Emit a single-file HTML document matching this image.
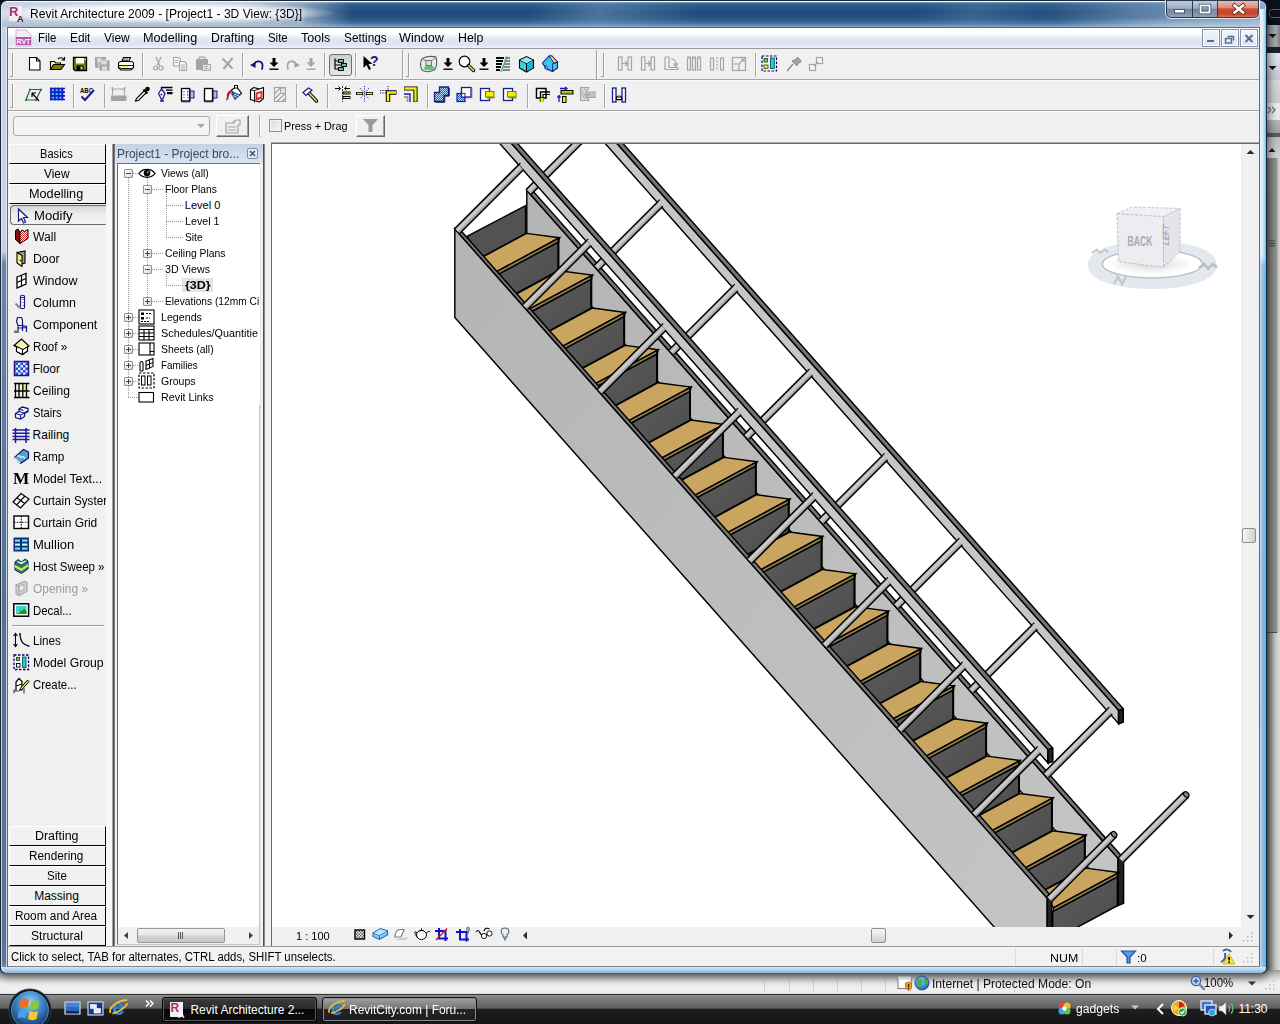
<!DOCTYPE html><html><head><meta charset="utf-8"><title>Revit Architecture 2009</title><style>html,body{margin:0;padding:0}body{width:1280px;height:1024px;position:relative;overflow:hidden;background:#0b111c;font-family:'Liberation Sans', sans-serif}span{-webkit-font-smoothing:antialiased}</style></head><body><div style="position:absolute;left:1266px;top:0px;width:14px;height:25px;background:#0b121c"></div>
<div style="position:absolute;left:1269px;top:9px;width:14px;height:9px;box-sizing:border-box;border:1px solid #59616e;border-radius:3px"></div>
<div style="position:absolute;left:1266px;top:25px;width:14px;height:22px;background:linear-gradient(90deg,#6e7276,#9a9ea2 30%,#a6aaae 70%,#7c8084)"></div>
<div style="position:absolute;left:1266px;top:47px;width:14px;height:6px;background:#1a222e"></div>
<div style="position:absolute;left:1266px;top:53px;width:14px;height:27px;background:linear-gradient(#e2e5ec,#c4c8d0)"></div>
<div style="position:absolute;left:1266px;top:80px;width:14px;height:23px;background:linear-gradient(#d6d8dd,#c9cbd0)"></div>
<div style="position:absolute;left:1266px;top:103px;width:14px;height:17px;background:#e7e8ec"></div>
<div style="position:absolute;left:1266px;top:120px;width:14px;height:13px;background:linear-gradient(#b4b7bb,#9b9ea3)"></div>
<div style="position:absolute;left:1266px;top:133px;width:14px;height:4px;background:#565a60"></div>
<div style="position:absolute;left:1266px;top:137px;width:14px;height:21px;background:linear-gradient(#b9b9b9,#d2d2d2)"></div>
<div style="position:absolute;left:1266px;top:158px;width:14px;height:475px;background:linear-gradient(90deg,#565a56,#7e827e 20%,#8e908c 75%,#c4c4c4 85%,#cfcfcf)"></div>
<div style="position:absolute;left:1266px;top:633px;width:14px;height:337px;background:linear-gradient(90deg,#5c605c,#8a8c8a 25%,#c6c6c6 65%,#dddddd)"></div>
<div style="position:absolute;left:1266px;top:632px;width:11px;height:1px;background:#4c4c4c"></div>
<svg width="14" height="140" viewBox="0 0 14 140" style="position:absolute;left:1266px;top:24px;overflow:visible;"><path d="M2.500 10h8l-4 4z" fill="#111"/><path d="M2.500 42h8l-4 4z" fill="#111"/><path d="M2 83l3 3-3 3M6 83l3 3-3 3" stroke="#6a6e74" stroke-width="1.200" fill="none"/><path d="M2.500 128h7l-3.500-4z" fill="#1c1c1c"/></svg>
<svg width="14" height="10" viewBox="0 0 14 10" style="position:absolute;left:1266px;top:240px;overflow:visible;"><path d="M3 1h6M3 3.500h6M3 6h6" stroke="#3a3a3a" stroke-width="0.900"/></svg>
<div style="position:absolute;left:0px;top:970px;width:1280px;height:24px;background:linear-gradient(#9b9b9b 0,#c9c9c9 5px,#e9e9e9 11px,#f1f1f1 14px,#ececec)"></div>
<div style="position:absolute;left:764px;top:978px;width:1px;height:14px;background:#d4d4d4"></div>
<div style="position:absolute;left:789px;top:978px;width:1px;height:14px;background:#d4d4d4"></div>
<div style="position:absolute;left:813px;top:978px;width:1px;height:14px;background:#d4d4d4"></div>
<div style="position:absolute;left:837px;top:978px;width:1px;height:14px;background:#d4d4d4"></div>
<div style="position:absolute;left:861px;top:978px;width:1px;height:14px;background:#d4d4d4"></div>
<div style="position:absolute;left:885px;top:978px;width:1px;height:14px;background:#d4d4d4"></div>
<div style="position:absolute;left:910px;top:978px;width:1px;height:14px;background:#d4d4d4"></div>
<div style="position:absolute;left:1014px;top:976px;width:1px;height:16px;background:#cfcfcf"></div>
<span id="t1" style="position:absolute;left:932.4px;top:978.04px;font:normal 12px/13.79px 'Liberation Sans', sans-serif;color:#111;white-space:pre;transform:scaleX(1.0084);transform-origin:0 0;">Internet | Protected Mode: On</span>
<span id="t2" style="position:absolute;left:1204.4px;top:977.04px;font:normal 12px/13.79px 'Liberation Sans', sans-serif;color:#111;white-space:pre;transform:scaleX(0.9510);transform-origin:0 0;">100%</span>
<div style="position:absolute;left:0px;top:994px;width:1280px;height:30px;background:linear-gradient(#343434 0,#343434 1px,#8e8e8e 1px,#7c7c7c 5px,#606060 14px,#1e1e20 15.5px,#161618)"></div>
<div style="position:absolute;left:0px;top:993px;width:1280px;height:1px;background:#dadada"></div>
<div style="position:absolute;left:162px;top:997px;width:155px;height:25px;border-radius:3px;border:1px solid #000;box-sizing:border-box;background:linear-gradient(#3c3c3c,#2a2a2a 46%,#060606 50%,#0e0e0e);box-shadow:inset 0 0 0 1px #5a5a5a"></div>
<div style="position:absolute;left:322px;top:997px;width:155px;height:25px;border-radius:3px;border:1px solid #111;box-sizing:border-box;background:linear-gradient(#a2a2a2,#747474 46%,#242426 50%,#1e1e20);box-shadow:inset 0 0 0 1px #8c8c8c"></div>
<span id="t3" style="position:absolute;left:190.4px;top:1004.04px;font:normal 12px/13.79px 'Liberation Sans', sans-serif;color:#fff;white-space:pre;">Revit Architecture 2...</span>
<span id="t4" style="position:absolute;left:349.4px;top:1004.04px;font:normal 12px/13.79px 'Liberation Sans', sans-serif;color:#fff;white-space:pre;transform:scaleX(0.9967);transform-origin:0 0;">RevitCity.com | Foru...</span>
<span id="t5" style="position:absolute;left:1076.4px;top:1003.04px;font:normal 12px/13.79px 'Liberation Sans', sans-serif;color:#fff;white-space:pre;transform:scaleX(1.0116);transform-origin:0 0;">gadgets</span>
<span id="t6" style="position:absolute;left:1238.4px;top:1003.04px;font:normal 12px/13.79px 'Liberation Sans', sans-serif;color:#fff;white-space:pre;">11:30</span>
<div style="position:absolute;left:0px;top:0px;width:1267px;height:974px;border-radius:7px 7px 6px 6px;background:#1a2838;box-shadow:0 2px 8px 2px rgba(0,0,0,.55)"></div>
<div style="position:absolute;left:1px;top:1px;width:1265px;height:972px;border-radius:6px;background:linear-gradient(#dfe7f2 0,#c9d5e6 30px,#c6d2e3 250px,#6c84a6 262px,#56708f 600px,#5b7594 960px,#7fa4c8)"></div>
<div style="position:absolute;left:2px;top:2px;width:1263px;height:25px;border-radius:5px 5px 0 0;background:radial-gradient(ellipse 175px 11px at 160px 11px,rgba(255,255,255,.95) 0,rgba(255,255,255,.9) 55%,rgba(255,255,255,.45) 80%,rgba(255,255,255,0) 100%),linear-gradient(90deg,rgba(201,212,227,1) 0,rgba(201,212,227,.97) 240px,rgba(201,212,227,.6) 300px,rgba(201,212,227,0) 350px),linear-gradient(100deg,rgba(255,255,255,0) 520px,rgba(150,185,220,.35) 590px,rgba(255,255,255,0) 690px,rgba(255,255,255,0) 900px,rgba(120,160,200,.25) 960px,rgba(255,255,255,0) 1040px),linear-gradient(#7f9dbd 0,#2d5b8c 2px,#1f4b7b 10px,#24527f 16px,#3e6c9a 21px,#6d95bb 24px,#86a8c8)"></div>
<div style="position:absolute;left:1040px;top:2px;width:225px;height:25px;border-radius:0 5px 0 0;background:linear-gradient(90deg,rgba(150,176,206,0),rgba(150,176,206,.45) 90px,rgba(176,196,220,.75) 215px)"></div>
<div style="position:absolute;left:1060px;top:17px;width:205px;height:10px;background:linear-gradient(rgba(200,214,232,0),rgba(200,214,232,.6));-webkit-mask-image:linear-gradient(90deg,transparent,#000 120px);mask-image:linear-gradient(90deg,transparent,#000 120px)"></div>
<div style="position:absolute;left:2px;top:18px;width:330px;height:9px;background:linear-gradient(rgba(150,168,192,0),rgba(150,168,192,.55));-webkit-mask-image:linear-gradient(90deg,#000 250px,transparent 330px);mask-image:linear-gradient(90deg,#000 250px,transparent 330px)"></div>
<div style="position:absolute;left:6px;top:1px;width:1254px;height:1px;background:rgba(255,255,255,.75)"></div>
<div style="position:absolute;left:1260px;top:9px;width:6px;height:959px;background:linear-gradient(90deg,rgba(255,255,255,.55),rgba(255,255,255,.1) 45%,rgba(80,200,250,.55) 85%,rgba(60,190,245,.95)),linear-gradient(#dcebf7 0,#cfe4f4 247px,#86b6e0 257px,#7aaedc 600px,#80b2de)"></div>
<div style="position:absolute;left:1259px;top:27px;width:1px;height:941px;background:#5d6b7d"></div>
<div style="position:absolute;left:1px;top:967px;width:1265px;height:6px;border-radius:0 0 5px 5px;background:linear-gradient(#dce8f6,#b5d0ec 50%,#86b4dc)"></div>
<div style="position:absolute;left:4px;top:973px;width:1259px;height:1px;background:#1d7088"></div>
<div style="position:absolute;left:8px;top:966px;width:1252px;height:1px;background:#7d8590"></div>
<div style="position:absolute;left:7px;top:27px;width:1px;height:940px;background:#646a72"></div>
<div style="position:absolute;left:6px;top:27px;width:1px;height:940px;background:rgba(225,236,250,.8)"></div>
<div style="position:absolute;left:1px;top:8px;width:1px;height:960px;background:rgba(225,236,250,.8)"></div>
<svg width="18" height="18" viewBox="0 0 18 18" style="position:absolute;left:9px;top:5px;overflow:visible;"><rect x="0" y="1" width="13" height="15" fill="#f4eef4" opacity=".9"/><text x="0" y="11" font-family="'Liberation Sans', sans-serif" font-weight="bold" font-size="13" fill="#b02a7a">R</text><text x="8" y="17" font-family="'Liberation Sans', sans-serif" font-weight="bold" font-size="9" fill="#222">A</text></svg>
<span id="t7" style="position:absolute;left:29.6px;top:7.84px;font:normal 12px/13.79px 'Liberation Sans', sans-serif;color:#000;white-space:pre;transform:scaleX(1.0060);transform-origin:0 0;text-shadow:0 0 4px #fff,0 0 6px #fff;">Revit Architecture 2009 - [Project1 - 3D View: {3D}]</span>
<div style="position:absolute;left:1165px;top:0px;width:95px;height:19px;border-radius:0 0 6px 6px;background:rgba(235,242,250,.85)"></div>
<div style="position:absolute;left:1166px;top:0px;width:93px;height:18px;border-radius:0 0 5px 5px;background:#2a3a50"></div>
<div style="position:absolute;left:1167px;top:1px;width:25px;height:16px;border-radius:0 0 0 4px;background:linear-gradient(#c2cddb,#9eafc4 45%,#71869f 52%,#8da0b8)"></div>
<div style="position:absolute;left:1193px;top:1px;width:24px;height:16px;background:linear-gradient(#c2cddb,#9eafc4 45%,#71869f 52%,#8da0b8)"></div>
<div style="position:absolute;left:1218px;top:1px;width:40px;height:16px;border-radius:0 0 4px 0;background:linear-gradient(#ecb7ab,#df917f 40%,#cc4d33 50%,#c7462a 80%,#da7050)"></div>
<svg width="94" height="16" viewBox="0 0 94 16" style="position:absolute;left:1165px;top:1px;overflow:visible;"><rect x="9.500" y="8.500" width="10" height="3.500" fill="#fff" stroke="#44546a" stroke-width="1"/><rect x="35.500" y="4.500" width="9" height="7" fill="none" stroke="#44546a" stroke-width="3.400"/><rect x="35.500" y="4.500" width="9" height="7" fill="none" stroke="#fff" stroke-width="1.800"/><path d="M69.500 4.500l8.500 7M78 4.500l-8.500 7" stroke="#6a2a1c" stroke-width="4.200" stroke-linecap="square"/><path d="M69.500 4.500l8.500 7M78 4.500l-8.500 7" stroke="#fff" stroke-width="2.500" stroke-linecap="square"/></svg>
<div style="position:absolute;left:8px;top:27px;width:1251px;height:21px;background:linear-gradient(#5b6b80 0,#5b6b80 1px,#ffffff 1px,#ffffff 7px,#e4e9f7 11px,#dde3f3 17px,#e8ecf7 20px,#f4f6fb)"></div>
<div style="position:absolute;left:8px;top:48px;width:1251px;height:1px;background:#9a9a9a"></div>
<svg width="18" height="18" viewBox="0 0 18 18" style="position:absolute;left:15px;top:29px;overflow:visible;"><path d="M1 1h10l5 5v11H1z" fill="#f6f0f6" stroke="#c9b2cf" stroke-width="1"/><rect x="1" y="8" width="15" height="8" fill="#b557a6"/><text x="1.5" y="15" font-family="'Liberation Sans', sans-serif" font-weight="bold" font-size="7" fill="#fff">RVT</text></svg>
<span id="t8" style="position:absolute;left:37.7px;top:32.04px;font:normal 12px/13.79px 'Liberation Sans', sans-serif;color:#000;white-space:pre;transform:scaleX(0.9512);transform-origin:0 0;">File</span>
<span id="t9" style="position:absolute;left:69.7px;top:32.04px;font:normal 12px/13.79px 'Liberation Sans', sans-serif;color:#000;white-space:pre;transform:scaleX(0.9861);transform-origin:0 0;">Edit</span>
<span id="t10" style="position:absolute;left:103.7px;top:32.04px;font:normal 12px/13.79px 'Liberation Sans', sans-serif;color:#000;white-space:pre;transform:scaleX(0.9962);transform-origin:0 0;">View</span>
<span id="t11" style="position:absolute;left:142.7px;top:32.04px;font:normal 12px/13.79px 'Liberation Sans', sans-serif;color:#000;white-space:pre;transform:scaleX(1.0550);transform-origin:0 0;">Modelling</span>
<span id="t12" style="position:absolute;left:210.7px;top:32.04px;font:normal 12px/13.79px 'Liberation Sans', sans-serif;color:#000;white-space:pre;transform:scaleX(1.0278);transform-origin:0 0;">Drafting</span>
<span id="t13" style="position:absolute;left:267.7px;top:32.04px;font:normal 12px/13.79px 'Liberation Sans', sans-serif;color:#000;white-space:pre;transform:scaleX(0.9523);transform-origin:0 0;">Site</span>
<span id="t14" style="position:absolute;left:301px;top:32.04px;font:normal 12px/13.79px 'Liberation Sans', sans-serif;color:#000;white-space:pre;transform:scaleX(1.0423);transform-origin:0 0;">Tools</span>
<span id="t15" style="position:absolute;left:343.7px;top:32.04px;font:normal 12px/13.79px 'Liberation Sans', sans-serif;color:#000;white-space:pre;transform:scaleX(0.9848);transform-origin:0 0;">Settings</span>
<span id="t16" style="position:absolute;left:399.4px;top:32.04px;font:normal 12px/13.79px 'Liberation Sans', sans-serif;color:#000;white-space:pre;transform:scaleX(1.0542);transform-origin:0 0;">Window</span>
<span id="t17" style="position:absolute;left:457.7px;top:32.04px;font:normal 12px/13.79px 'Liberation Sans', sans-serif;color:#000;white-space:pre;transform:scaleX(1.0289);transform-origin:0 0;">Help</span>
<div style="position:absolute;left:1202px;top:29px;width:18px;height:18px;box-sizing:border-box;border:1px solid #8391a6;background:linear-gradient(#f2f6fc,#dce6f5);box-shadow:inset 0 0 0 1px #fff"></div>
<div style="position:absolute;left:1221px;top:29px;width:18px;height:18px;box-sizing:border-box;border:1px solid #8391a6;background:linear-gradient(#f2f6fc,#dce6f5);box-shadow:inset 0 0 0 1px #fff"></div>
<div style="position:absolute;left:1240px;top:29px;width:18px;height:18px;box-sizing:border-box;border:1px solid #8391a6;background:linear-gradient(#f2f6fc,#dce6f5);box-shadow:inset 0 0 0 1px #fff"></div>
<svg width="56" height="18" viewBox="0 0 56 18" style="position:absolute;left:1202px;top:29px;overflow:visible;"><rect x="5" y="11" width="7" height="2" fill="#5b6b82"/><path d="M25.500 7.500h6v4" fill="none" stroke="#5b6b82" stroke-width="1.4"/><rect x="23.500" y="9.500" width="6" height="4.500" fill="none" stroke="#5b6b82" stroke-width="1.400"/><path d="M43.500 6l7 7M50.500 6l-7 7" stroke="#5b6b82" stroke-width="2"/></svg>
<div style="position:absolute;left:8px;top:49px;width:1251px;height:93px;background:#f0f0f0"></div>
<div style="position:absolute;left:8px;top:79px;width:1251px;height:1px;background:#a8a8a8"></div>
<div style="position:absolute;left:8px;top:80px;width:1251px;height:1px;background:#fbfbfb"></div>
<div style="position:absolute;left:8px;top:110px;width:1251px;height:1px;background:#a8a8a8"></div>
<div style="position:absolute;left:8px;top:111px;width:1251px;height:1px;background:#fbfbfb"></div>
<div style="position:absolute;left:12px;top:53px;width:1px;height:24px;background:#9c9c9c"></div>
<div style="position:absolute;left:13px;top:53px;width:1px;height:24px;background:#ffffff"></div>
<div style="position:absolute;left:10px;top:76px;width:3px;height:1px;background:#9c9c9c"></div>
<div style="position:absolute;left:12px;top:84px;width:1px;height:24px;background:#9c9c9c"></div>
<div style="position:absolute;left:13px;top:84px;width:1px;height:24px;background:#ffffff"></div>
<div style="position:absolute;left:10px;top:107px;width:3px;height:1px;background:#9c9c9c"></div>
<div style="position:absolute;left:402px;top:50px;width:1px;height:29px;background:#a0a0a0"></div>
<div style="position:absolute;left:403px;top:50px;width:1px;height:29px;background:#fdfdfd"></div>
<div style="position:absolute;left:408px;top:53px;width:1px;height:24px;background:#9c9c9c"></div>
<div style="position:absolute;left:409px;top:53px;width:1px;height:24px;background:#ffffff"></div>
<div style="position:absolute;left:406px;top:76px;width:3px;height:1px;background:#9c9c9c"></div>
<div style="position:absolute;left:596px;top:50px;width:1px;height:29px;background:#a0a0a0"></div>
<div style="position:absolute;left:597px;top:50px;width:1px;height:29px;background:#fdfdfd"></div>
<div style="position:absolute;left:603px;top:53px;width:1px;height:24px;background:#9c9c9c"></div>
<div style="position:absolute;left:604px;top:53px;width:1px;height:24px;background:#ffffff"></div>
<div style="position:absolute;left:601px;top:76px;width:3px;height:1px;background:#9c9c9c"></div>
<div style="position:absolute;left:142px;top:53px;width:1px;height:24px;background:#a6a6a6"></div>
<div style="position:absolute;left:143px;top:53px;width:1px;height:24px;background:#fcfcfc"></div>
<div style="position:absolute;left:242px;top:53px;width:1px;height:24px;background:#a6a6a6"></div>
<div style="position:absolute;left:243px;top:53px;width:1px;height:24px;background:#fcfcfc"></div>
<div style="position:absolute;left:324px;top:53px;width:1px;height:24px;background:#a6a6a6"></div>
<div style="position:absolute;left:325px;top:53px;width:1px;height:24px;background:#fcfcfc"></div>
<div style="position:absolute;left:355px;top:53px;width:1px;height:24px;background:#a6a6a6"></div>
<div style="position:absolute;left:356px;top:53px;width:1px;height:24px;background:#fcfcfc"></div>
<div style="position:absolute;left:755px;top:53px;width:1px;height:24px;background:#a6a6a6"></div>
<div style="position:absolute;left:756px;top:53px;width:1px;height:24px;background:#fcfcfc"></div>
<div style="position:absolute;left:73px;top:84px;width:1px;height:24px;background:#a6a6a6"></div>
<div style="position:absolute;left:74px;top:84px;width:1px;height:24px;background:#fcfcfc"></div>
<div style="position:absolute;left:104px;top:84px;width:1px;height:24px;background:#a6a6a6"></div>
<div style="position:absolute;left:105px;top:84px;width:1px;height:24px;background:#fcfcfc"></div>
<div style="position:absolute;left:296px;top:84px;width:1px;height:24px;background:#a6a6a6"></div>
<div style="position:absolute;left:297px;top:84px;width:1px;height:24px;background:#fcfcfc"></div>
<div style="position:absolute;left:327px;top:84px;width:1px;height:24px;background:#a6a6a6"></div>
<div style="position:absolute;left:328px;top:84px;width:1px;height:24px;background:#fcfcfc"></div>
<div style="position:absolute;left:427px;top:84px;width:1px;height:24px;background:#a6a6a6"></div>
<div style="position:absolute;left:428px;top:84px;width:1px;height:24px;background:#fcfcfc"></div>
<div style="position:absolute;left:527px;top:84px;width:1px;height:24px;background:#a6a6a6"></div>
<div style="position:absolute;left:528px;top:84px;width:1px;height:24px;background:#fcfcfc"></div>
<div style="position:absolute;left:604px;top:84px;width:1px;height:24px;background:#a6a6a6"></div>
<div style="position:absolute;left:605px;top:84px;width:1px;height:24px;background:#fcfcfc"></div>
<div style="position:absolute;left:329px;top:54px;width:23px;height:22px;box-sizing:border-box;border:1px solid #6f6f6f;border-radius:3px;background:linear-gradient(#cfcfcf,#e6e6e6)"></div>
<div style="position:absolute;left:13px;top:116px;width:197px;height:20px;box-sizing:border-box;border:1px solid #a9a9a9;border-radius:3px;background:#f4f4f4"></div>
<svg width="10" height="8" viewBox="0 0 10 8" style="position:absolute;left:196px;top:122px;overflow:visible;"><path d="M1 2h8l-4 4z" fill="#a8a8a8"/></svg>
<div style="position:absolute;left:216px;top:115px;width:33px;height:22px;box-sizing:border-box;background:#f0f0f0;border-top:1px solid #fff;border-left:1px solid #fff;border-right:1px solid #696969;border-bottom:1px solid #696969;box-shadow:inset -1px -1px 0 #a0a0a0"></div>
<div style="position:absolute;left:259px;top:115px;width:1px;height:22px;background:#a6a6a6"></div>
<div style="position:absolute;left:260px;top:115px;width:1px;height:22px;background:#fcfcfc"></div>
<div style="position:absolute;left:269px;top:119px;width:13px;height:13px;box-sizing:border-box;border:1px solid #8e8f8f;background:linear-gradient(135deg,#d9d9d9,#f7f7f7);box-shadow:inset 0 0 0 1px #f4f4f4"></div>
<span id="t18" style="position:absolute;left:284px;top:119.69px;font:normal 11.5px/13.21px 'Liberation Sans', sans-serif;color:#000;white-space:pre;transform:scaleX(0.9416);transform-origin:0 0;">Press + Drag</span>
<div style="position:absolute;left:356px;top:115px;width:29px;height:22px;box-sizing:border-box;background:#f0f0f0;border-top:1px solid #fff;border-left:1px solid #fff;border-right:1px solid #696969;border-bottom:1px solid #696969;box-shadow:inset -1px -1px 0 #a0a0a0"></div>
<svg width="18" height="16" viewBox="0 0 18 16" style="position:absolute;left:362px;top:118px;overflow:visible;"><path d="M1 1h15l-5.500 6v7h-4V7z" fill="#9a9a9a"/></svg>
<svg width="18" height="18" viewBox="0 0 18 18" style="position:absolute;left:224px;top:117px;overflow:visible;"><path d="M2 6h8l2-3h4v5h-2v8H2z" fill="none" stroke="#a4a4a4" stroke-width="1.2"/><path d="M4 10h8M4 13h8" stroke="#a4a4a4"/><path d="M8 6l3-3" stroke="#a4a4a4"/></svg>
<svg width="16" height="16" viewBox="0 0 16 16" style="position:absolute;left:28px;top:56px;overflow:visible;"><path d="M1.500 1.500h7l3.500 3.500v9h-10.500z" fill="#fff" stroke="#000" stroke-width="1.1"/><path d="M8.500 1.500v3.500h3.500" fill="none" stroke="#000" stroke-width="1.1"/></svg>
<svg width="16" height="16" viewBox="0 0 16 16" style="position:absolute;left:49px;top:56px;overflow:visible;"><path d="M1.500 13.500v-8h4l1 1.500h5v2" fill="#ffff80" stroke="#000" stroke-width="1.1"/><path d="M1.500 13.500l3-5h11l-3.500 5z" fill="#808000" stroke="#000" stroke-width="1.1"/><path d="M9 3c2-2 5-1.500 6 .5M15.500 1v3h-3" fill="none" stroke="#000" stroke-width="1.1"/></svg>
<svg width="16" height="16" viewBox="0 0 16 16" style="position:absolute;left:72px;top:56px;overflow:visible;"><path d="M1.500 1.500h13v13h-11.500l-1.500-1.500z" fill="#808000" stroke="#000" stroke-width="1.300"/><rect x="4" y="2" width="8" height="5.500" fill="#fff"/><rect x="4.500" y="9.500" width="7" height="5" fill="#000"/><rect x="8.500" y="10.500" width="2" height="3" fill="#c8c8c8"/><rect x="12.500" y="2.500" width="1.200" height="1.200" fill="#fff"/></svg>
<svg width="17" height="17" viewBox="0 0 17 17" style="position:absolute;left:94px;top:55px;overflow:visible;"><path d="M1 2h11v11h-10l-1-1z" fill="#a4a4a4"/><path d="M5 5h11v11h-10l-1-1z" fill="#a4a4a4" stroke="#f4f4f4" stroke-width=".8"/><rect x="7" y="6" width="6" height="3.500" fill="#dcdcdc"/><rect x="8" y="11.500" width="5" height="3.500" fill="#dcdcdc"/><path d="M3 3l4 4M7 3L3 7" stroke="#e4e4e4" stroke-width="1.400"/></svg>
<svg width="18" height="16" viewBox="0 0 18 16" style="position:absolute;left:117px;top:56px;overflow:visible;"><path d="M4.500 6l2-4.500h7l-2 4.500" fill="#fff" stroke="#000" stroke-width="1.1"/><path d="M6.500 3h5M6 4.500h5" stroke="#000" stroke-width=".7"/><path d="M1.500 7.500c0-1.500 1.500-2 3-2h9c1.500 0 3 .5 3 2v4l-2.500 2.500h-10l-2.500-2z" fill="#fff" stroke="#000" stroke-width="1.1"/><path d="M1.500 9.500h15M2 11.500l2.500 1h10" fill="none" stroke="#000" stroke-width="1"/><rect x="5" y="9.800" width="6" height="1.400" fill="#e8e840"/></svg>
<svg width="16" height="16" viewBox="0 0 16 16" style="position:absolute;left:152px;top:56px;overflow:visible;"><path d="M4 1l4 9M9 1l-4 9" stroke="#a4a4a4" stroke-width="1.200" fill="none"/><circle cx="3.500" cy="12" r="2" fill="none" stroke="#a4a4a4" stroke-width="1.200"/><circle cx="9" cy="12" r="2" fill="none" stroke="#a4a4a4" stroke-width="1.200"/></svg>
<svg width="16" height="16" viewBox="0 0 16 16" style="position:absolute;left:172px;top:56px;overflow:visible;"><path d="M1.500 1.500h5l2 2v6.500h-7z" fill="#f4f4f4" stroke="#a4a4a4" stroke-width="1.100"/><path d="M7.500 5.500h5l2 2v7h-7z" fill="#f4f4f4" stroke="#a4a4a4" stroke-width="1.100"/><path d="M3 4.500h3M3 6.500h3M9 9h4M9 11h4M9 13h4" stroke="#a4a4a4" stroke-width=".9"/></svg>
<svg width="16" height="16" viewBox="0 0 16 16" style="position:absolute;left:195px;top:56px;overflow:visible;"><rect x="1" y="3" width="12" height="11" rx="1" fill="#a4a4a4"/><rect x="4" y="1.200" width="6" height="3" rx="1" fill="none" stroke="#a4a4a4" stroke-width="1.200"/><rect x="7.500" y="8.500" width="8" height="6" fill="#ececec" stroke="#a4a4a4" stroke-width="1"/><path d="M9 10.500h4M9 12.500h5" stroke="#a4a4a4" stroke-width=".9"/></svg>
<svg width="14" height="14" viewBox="0 0 14 14" style="position:absolute;left:221px;top:57px;overflow:visible;"><path d="M1.500 1.500l10 10M11.500 1l-9 11" stroke="#a4a4a4" stroke-width="2" fill="none"/></svg>
<svg width="16" height="14" viewBox="0 0 16 14" style="position:absolute;left:249px;top:57px;overflow:visible;"><path d="M1 8l5.500-3v6z" fill="#101070"/><path d="M5 8c1-5 9-5 8.500 1.500c0 1.500-.5 2.500-1 3" fill="none" stroke="#101070" stroke-width="1.700"/></svg>
<svg width="12" height="14" viewBox="0 0 12 14" style="position:absolute;left:268px;top:57px;overflow:visible;"><path d="M4.500 1h3v4.500h3l-4.500 4.500-4.500-4.500h3z" fill="#000"/><rect x="1.500" y="11.500" width="9" height="1.400" fill="#000"/></svg>
<svg width="16" height="14" viewBox="0 0 16 14" style="position:absolute;left:285px;top:57px;overflow:visible;"><path d="M15 8l-5.500-3v6z" fill="#a4a4a4"/><path d="M11 8c-1-5-9-5-8.500 1.500c0 1.500.5 2.500 1 3" fill="none" stroke="#a4a4a4" stroke-width="1.700"/></svg>
<svg width="12" height="14" viewBox="0 0 12 14" style="position:absolute;left:305px;top:57px;overflow:visible;"><path d="M4.500 1h3v4.500h3l-4.500 4.500-4.500-4.500h3z" fill="#a4a4a4"/><rect x="1.500" y="11.500" width="9" height="1.400" fill="#a4a4a4"/></svg>
<svg width="17" height="16" viewBox="0 0 17 16" style="position:absolute;left:332px;top:57px;overflow:visible;"><path d="M3 1.500v10.500h4M3 4h4M3 8h7" fill="none" stroke="#000" stroke-width="1.200"/><rect x="6.500" y="2.500" width="5" height="3" fill="#50c8a8" stroke="#000" stroke-width=".9"/><rect x="9.500" y="6.500" width="5" height="3" fill="#50c8a8" stroke="#000" stroke-width=".9"/><rect x="6.500" y="10.500" width="5" height="3" fill="#50c8a8" stroke="#000" stroke-width=".9"/></svg>
<svg width="18" height="18" viewBox="0 0 18 18" style="position:absolute;left:362px;top:55px;overflow:visible;"><path d="M1.500 1l0 12 3-3 2.500 5 2-1-2.500-5h4z" fill="#000"/><text x="8" y="11" font-family="'Liberation Sans', sans-serif" font-weight="bold" font-size="14" fill="#1a1a8a">?</text></svg>
<svg width="18" height="18" viewBox="0 0 18 18" style="position:absolute;left:420px;top:55px;overflow:visible;"><path d="M2 4c3-3 11-3 14-2c1 4 1 10-2 13c-4 2-9 2-12 0c-2-4-2-8 0-11z" fill="#e8e8e8" stroke="#5a5a5a" stroke-width="1.100"/><path d="M3.500 13.500c3 2 8 2 11 0l-3-3.500h-5z" fill="#5cc46c"/><rect x="6" y="5.500" width="5.500" height="5" fill="#dcdcdc" stroke="#7a7a7a" stroke-width="1"/><path d="M2.500 3.500l3.500 2.500M15.500 2.500l-4 3.500" stroke="#7a7a7a" stroke-width="1"/></svg>
<svg width="12" height="14" viewBox="0 0 12 14" style="position:absolute;left:442px;top:57px;overflow:visible;"><path d="M4.500 1h3v4.500h3l-4.500 4.500-4.500-4.500h3z" fill="#000"/><rect x="1.500" y="11.500" width="9" height="1.400" fill="#000"/></svg>
<svg width="18" height="18" viewBox="0 0 18 18" style="position:absolute;left:458px;top:55px;overflow:visible;"><circle cx="6.500" cy="6.500" r="5.300" fill="#fff" stroke="#000" stroke-width="1.200"/><path d="M10.500 10.500l5 5" stroke="#000" stroke-width="3.200" stroke-linecap="round"/><path d="M10.800 10.800l4.600 4.600" stroke="#e8e850" stroke-width="1.500" stroke-linecap="round"/></svg>
<svg width="12" height="14" viewBox="0 0 12 14" style="position:absolute;left:478px;top:57px;overflow:visible;"><path d="M4.500 1h3v4.500h3l-4.500 4.500-4.500-4.500h3z" fill="#000"/><rect x="1.500" y="11.500" width="9" height="1.400" fill="#000"/></svg>
<svg width="16" height="16" viewBox="0 0 16 16" style="position:absolute;left:495px;top:56px;overflow:visible;"><path d="M1 2h8M1 5h7M1 8h6M1 11h5M1 14h4" stroke="#000" stroke-width="2"/><path d="M10 2h5M9.500 5h5.500M9 8h6M8.500 11h6.500M8 14h7" stroke="#000" stroke-width=".9"/><path d="M12 .5l-6 15.500" stroke="#58a090" stroke-width="1.400"/></svg>
<svg width="17" height="18" viewBox="0 0 17 18" style="position:absolute;left:518px;top:55px;overflow:visible;"><path d="M1.500 5l7-3.500 7 3.500v8l-7 4-7-4z" fill="#30d8e8" stroke="#000" stroke-width="1.100"/><path d="M1.500 5l7 3.500 7-3.500M8.500 8.500v8.500" fill="none" stroke="#000" stroke-width="1.100"/><path d="M2.200 5.200l6.300-3 6.300 3-6.300 3z" fill="#90e8f0"/><path d="M9 9l6-3v6.800l-6 3.400z" fill="#18b8c8"/></svg>
<svg width="18" height="19" viewBox="0 0 18 19" style="position:absolute;left:541px;top:54px;overflow:visible;"><path d="M1.500 9l6.500-7 3 0 5.500 6v6l-5 3.500-6.500-3z" fill="#38c8e8" stroke="#1a1a8a" stroke-width="1.100"/><path d="M8 2l3 0 5.500 6-3 1.500z" fill="#f0e040" stroke="#1a1a8a" stroke-width=".9"/><path d="M4 11.500v4M4 11.500l2 1v4" fill="#fff" stroke="#1a1a8a" stroke-width=".8"/><path d="M11.500 17v-7.500l5-1.500" fill="none" stroke="#1a1a8a" stroke-width=".9"/></svg>
<svg width="16" height="16" viewBox="0 0 16 16" style="position:absolute;left:617px;top:56px;overflow:visible;"><g fill="none" stroke="#a4a4a4" stroke-width="1.200"><rect x="1.500" y="1" width="3.500" height="13"/><rect x="11" y="1" width="3.500" height="13"/><path d="M5 7.500h5M8 5l2.500 2.500-2.500 2.500"/></g></svg>
<svg width="16" height="16" viewBox="0 0 16 16" style="position:absolute;left:640px;top:56px;overflow:visible;"><g fill="none" stroke="#a4a4a4" stroke-width="1.200"><rect x="1.500" y="1" width="3.500" height="13"/><rect x="11" y="1" width="3.500" height="13"/><path d="M5 7.500h5M8 5l2.500 2.500-2.500 2.500"/></g></svg>
<svg width="16" height="16" viewBox="0 0 16 16" style="position:absolute;left:663px;top:56px;overflow:visible;"><g fill="none" stroke="#a4a4a4" stroke-width="1.200"><path d="M2 1v12.500h12.500M2 13.500h13v-2h-9v-10.500h-4"/><path d="M8 3c3 0 5 2 5 5M11 8h3.500l-2 2.500z"/></g></svg>
<svg width="16" height="16" viewBox="0 0 16 16" style="position:absolute;left:686px;top:56px;overflow:visible;"><g fill="none" stroke="#a4a4a4" stroke-width="1.200"><rect x="1.500" y="2" width="3" height="12"/><rect x="6.500" y="2" width="3" height="12"/><rect x="11.500" y="2" width="3" height="12"/><path d="M1 1h4M6 1h4M11 1h4"/></g></svg>
<svg width="16" height="16" viewBox="0 0 16 16" style="position:absolute;left:709px;top:56px;overflow:visible;"><g fill="none" stroke="#a4a4a4" stroke-width="1.200"><rect x="1.500" y="2" width="3" height="12"/><rect x="11.500" y="2" width="3" height="12"/><path d="M8 1v14" stroke-dasharray="2 1.500"/></g></svg>
<svg width="16" height="16" viewBox="0 0 16 16" style="position:absolute;left:731px;top:56px;overflow:visible;"><g fill="none" stroke="#a4a4a4" stroke-width="1.200"><rect x="1.500" y="1.500" width="13" height="13"/><path d="M1.500 8h6.500v6.500M8 8l5-5M10 3h3v3"/></g></svg>
<svg width="17" height="18" viewBox="0 0 17 18" style="position:absolute;left:761px;top:55px;overflow:visible;"><rect x="1" y="1" width="14.500" height="15" fill="#f0f0f0" stroke="#000060" stroke-width="1.200" stroke-dasharray="2.500 1.500"/><rect x="3" y="3.500" width="3.500" height="3.500" fill="#70d040" stroke="#104010" stroke-width=".8"/><rect x="3" y="10" width="4" height="3.500" fill="#f0e040" stroke="#404000" stroke-width=".8"/><rect x="9.500" y="3" width="3.800" height="10.500" fill="#20d0d8" stroke="#004048" stroke-width=".8"/></svg>
<svg width="17" height="17" viewBox="0 0 17 17" style="position:absolute;left:786px;top:55px;overflow:visible;"><path d="M1 16l6-7" stroke="#8a8a8a" stroke-width="1.300"/><path d="M6 6l5 5 1.500-3 3-1.500-4-4.500-1.500 2.500z" fill="#a4a4a4" stroke="#8a8a8a" stroke-width="1"/></svg>
<svg width="16" height="16" viewBox="0 0 16 16" style="position:absolute;left:808px;top:56px;overflow:visible;"><rect x="8.500" y="1.500" width="6" height="6" fill="#f6f6f6" stroke="#a4a4a4" stroke-width="1.200"/><rect x="1.500" y="8.500" width="6" height="6" fill="#f6f6f6" stroke="#a4a4a4" stroke-width="1.200"/><path d="M6 10l4-4" stroke="#a4a4a4" stroke-width="1.200"/></svg>
<svg width="18" height="15" viewBox="0 0 18 15" style="position:absolute;left:25px;top:87px;overflow:visible;"><path d="M5 2.500h11l-5 10.500h-10z" fill="none" stroke="#207020" stroke-width="1.200"/><circle cx="5" cy="2.500" r="1" fill="#207020"/><circle cx="16" cy="2.500" r="1" fill="#207020"/><circle cx="1" cy="13" r="1" fill="#207020"/><circle cx="11" cy="13" r="1" fill="#207020"/><path d="M14 14l-7-8M7 6v4M7 6h4" stroke="#000" stroke-width="1.200" fill="none"/></svg>
<svg width="17" height="14" viewBox="0 0 17 14" style="position:absolute;left:49px;top:87px;overflow:visible;"><rect x="1.500" y="1.500" width="13.500" height="11" fill="#30d0f8"/><path d="M1 1.500h15M1 5.200h15M1 8.800h15M1 12.500h15M2 .5v13M5.800 .5v13M9.500 .5v13M13.200 .5v13" stroke="#1818c0" stroke-width="1.700"/></svg>
<svg width="16" height="16" viewBox="0 0 16 16" style="position:absolute;left:80px;top:86px;overflow:visible;"><text x="0" y="6.500" font-family="'Liberation Sans', sans-serif" font-weight="bold" font-size="7" fill="#000" textLength="13" lengthAdjust="spacingAndGlyphs">ABC</text><path d="M1.500 10.500l3.500 3.500 9-10" fill="none" stroke="#1a1a8a" stroke-width="2"/></svg>
<svg width="18" height="16" viewBox="0 0 18 16" style="position:absolute;left:110px;top:86px;overflow:visible;"><rect x="1" y="9.500" width="15.500" height="5.500" fill="#a4a4a4"/><path d="M2.500 1v8M14.500 1v8M2.500 3h12M1 1.500l3 3M13 4.500l3-3" stroke="#a4a4a4" stroke-width="1" fill="none"/></svg>
<svg width="17" height="17" viewBox="0 0 17 17" style="position:absolute;left:134px;top:86px;overflow:visible;"><path d="M1.500 15l1-2.500 8-8 2 2-8 8z" fill="#fff" stroke="#000" stroke-width="1.100"/><path d="M9.500 3.500l4 4" stroke="#000" stroke-width="2.200"/><circle cx="13.500" cy="3" r="2.300" fill="#000"/></svg>
<svg width="17" height="17" viewBox="0 0 17 17" style="position:absolute;left:157px;top:86px;overflow:visible;"><path d="M4.500 3l3.500 4.500-3 7-3.500-7z" fill="#fff" stroke="#1a1a8a" stroke-width="1.300"/><circle cx="4.500" cy="8.500" r="1" fill="#1a1a8a"/><path d="M3 15h4" stroke="#1a1a8a" stroke-width="1.400"/><path d="M4.500 3v-1.500h11" fill="none" stroke="#000" stroke-width="1.300"/><rect x="9" y="3.500" width="6.500" height="1.300" fill="#000"/><rect x="10" y="6" width="5.500" height="2.200" fill="#000"/></svg>
<svg width="16" height="16" viewBox="0 0 16 16" style="position:absolute;left:180px;top:87px;overflow:visible;"><rect x="9" y="4" width="5" height="7" fill="#b8b8d8" stroke="#1a1a8a" stroke-width="1"/><rect x="1.500" y="1.500" width="8" height="12.500" fill="#fff" stroke="#000" stroke-width="1.300"/><path d="M10 1.500v13M1.500 14.800h8.500" stroke="#1a1a5a" stroke-width="1"/><path d="M4 4v7M7.500 4v7" stroke="#1a1a8a" stroke-width=".8" stroke-dasharray="1.500 1.500"/></svg>
<svg width="16" height="16" viewBox="0 0 16 16" style="position:absolute;left:203px;top:87px;overflow:visible;"><rect x="9" y="4" width="5" height="7" fill="#b8b8d8" stroke="#1a1a8a" stroke-width="1"/><rect x="1.500" y="1.500" width="8" height="12.500" fill="#fff" stroke="#000" stroke-width="1.300"/><path d="M10 1.500v13M1.500 14.800h8.500" stroke="#1a1a5a" stroke-width="1"/></svg>
<svg width="18" height="18" viewBox="0 0 18 18" style="position:absolute;left:225px;top:85px;overflow:visible;"><path d="M6.500 5l5-3.500 5 7-6.500 5.500z" fill="#fff" stroke="#000" stroke-width="1.100"/><path d="M8 6.500l7.500 3.500-5.500 4.500-4-5.500z" fill="#2050a0"/><path d="M9 9l5 2M8 10.500l4 2" stroke="#fff" stroke-width=".8"/><path d="M6.500 5c-3 .5-5 3-4.500 7l1.500 1.500c0-3 1-5 3.500-6.500z" fill="#c01818"/><path d="M2 12l-1 4 2.500-2.500z" fill="#800000"/><rect x="9.500" y=".5" width="3" height="2.500" fill="#fff" stroke="#000" stroke-width=".9"/></svg>
<svg width="16" height="18" viewBox="0 0 16 18" style="position:absolute;left:249px;top:86px;overflow:visible;"><path d="M1.500 4l3-2.500 6 1.500 4-1.500v11l-4 3.500-9-2.500z" fill="#fff" stroke="#000" stroke-width="1.100"/><path d="M5.500 4.500v12M1.500 4l4 .5 5-1.500" fill="none" stroke="#000" stroke-width=".9"/><path d="M6.500 6.500l7-2v8l-7 2.500z" fill="#e03030"/><rect x="8.500" y="7.500" width="3" height="3.500" fill="#fff" transform="skewY(-14) translate(0,2.500)"/></svg>
<svg width="15" height="17" viewBox="0 0 15 17" style="position:absolute;left:273px;top:86px;overflow:visible;"><rect x="1.500" y="1.500" width="11" height="14" fill="#f4f4f4" stroke="#a4a4a4" stroke-width="1.100"/><path d="M1.500 8l6-6.500M1.500 13l11-11M4 15.500l8.500-8.500M9 15.500l3.500-3.500" stroke="#a4a4a4" stroke-width="1.300"/><rect x="7.500" y="2" width="5" height="5.500" fill="#e0e0e0" stroke="#a4a4a4" stroke-width="1"/></svg>
<svg width="17" height="16" viewBox="0 0 17 16" style="position:absolute;left:302px;top:87px;overflow:visible;"><path d="M6 5l8.500 9" stroke="#000" stroke-width="3.400" stroke-linecap="round"/><path d="M6.300 5.300l8 8.500" stroke="#f0e870" stroke-width="1.600" stroke-linecap="round"/><path d="M1 5.500l5.500-4.500 3.500 2-6 5.500z" fill="#fff" stroke="#1a1a8a" stroke-width="1.200"/></svg>
<svg width="18" height="16" viewBox="0 0 18 16" style="position:absolute;left:334px;top:86px;overflow:visible;"><path d="M1 2.500h5M16 2.500h-5M4.500 .5l2 2-2 2M12.500 .5l-2 2 2 2" fill="none" stroke="#000" stroke-width="1"/><path d="M8.500 0v16" stroke="#000" stroke-width=".8" stroke-dasharray="2 1"/><path d="M8.500 7h8M8.500 11.500h8" stroke="#000" stroke-width="3"/><path d="M9.500 7h6.500M9.500 11.500h6.500" stroke="#f0e840" stroke-width="1.200"/></svg>
<svg width="18" height="16" viewBox="0 0 18 16" style="position:absolute;left:356px;top:86px;overflow:visible;"><path d="M0 7.500h7M10 7.500h7" stroke="#000" stroke-width="3.200"/><path d="M.8 7.500h5.500M10.800 7.500h5.500" stroke="#f0e840" stroke-width="1.300"/><path d="M8.500 0v16M4 2l9 11M13 2l-9 11" stroke="#1a1a8a" stroke-width=".9" stroke-dasharray="1.200 1.200"/></svg>
<svg width="18" height="17" viewBox="0 0 18 17" style="position:absolute;left:380px;top:86px;overflow:visible;"><path d="M8 16v-9.500h8.500" fill="none" stroke="#000" stroke-width="4.400"/><path d="M8 15.500v-9h8" fill="none" stroke="#f8f000" stroke-width="2.400"/><path d="M0 4.500h8M8 0v5M0 7h6" stroke="#1a1a8a" stroke-width="1" stroke-dasharray="1.200 1.200"/></svg>
<svg width="16" height="17" viewBox="0 0 16 17" style="position:absolute;left:403px;top:86px;overflow:visible;"><path d="M1 2.500h11.500v13.500" fill="none" stroke="#000" stroke-width="4.200"/><path d="M1.500 2.500h11v13" fill="none" stroke="#f8f000" stroke-width="2.300"/><path d="M1 8h6v8" fill="none" stroke="#1a1a8a" stroke-width="1.300"/><path d="M1 11h3.500v5" fill="none" stroke="#9a9a9a" stroke-width="1.800"/></svg>
<svg width="17" height="17" viewBox="0 0 17 17" style="position:absolute;left:433px;top:86px;overflow:visible;"><defs><pattern id="dotb" width="2" height="2" patternUnits="userSpaceOnUse"><rect width="2" height="2" fill="#b8e0f8"/><rect width="1" height="1" fill="#2060c0"/><rect x="1" y="1" width="1" height="1" fill="#2060c0"/></pattern></defs><path d="M6.500 1h9v8.500h-4.500v6h-9.500v-9h5z" fill="url(#dotb)" stroke="#1a1a8a" stroke-width="1.300"/><path d="M16.200 2v8h-4.500v6.200h-9" fill="none" stroke="#101050" stroke-width="1"/></svg>
<svg width="17" height="17" viewBox="0 0 17 17" style="position:absolute;left:456px;top:86px;overflow:visible;"><rect x="1" y="7.500" width="8" height="8" fill="url(#dotb)" stroke="#1a1a8a" stroke-width="1.200"/><rect x="5.500" y="1.500" width="9.500" height="9.500" fill="#fff" stroke="#1a1a8a" stroke-width="1.300"/><rect x="5.500" y="7.500" width="3.500" height="3.500" fill="#fff" stroke="#1a1a8a" stroke-width=".9"/><path d="M15.800 2.500v9.200h-6" fill="none" stroke="#606080" stroke-width="1"/></svg>
<svg width="17" height="16" viewBox="0 0 17 16" style="position:absolute;left:479px;top:87px;overflow:visible;"><rect x="1.500" y="1.500" width="9" height="12" fill="#fff" stroke="#1a1a8a" stroke-width="1.300"/><rect x="6.5" y="4.500" width="8.500" height="5.500" fill="#f0f000" stroke="#707000" stroke-width=".9"/><path d="M7.5 10.800h8" stroke="#808000" stroke-width="1.200"/></svg>
<svg width="17" height="16" viewBox="0 0 17 16" style="position:absolute;left:502px;top:87px;overflow:visible;"><rect x="1.500" y="1.500" width="9" height="12" fill="#fff" stroke="#1a1a8a" stroke-width="1.300"/><rect x="5.5" y="4.500" width="8.500" height="5.500" fill="#f0f000" stroke="#707000" stroke-width=".9"/><path d="M6.5 10.800h8" stroke="#808000" stroke-width="1.200"/></svg>
<svg width="17" height="16" viewBox="0 0 17 16" style="position:absolute;left:535px;top:87px;overflow:visible;"><path d="M1.500 1.500h9.500v9.500h-9.500z" fill="#fff" stroke="#000" stroke-width="1.500"/><path d="M5.500 15v-10h9.500" fill="none" stroke="#000" stroke-width="1.500"/><path d="M8 15v-7.500h7" fill="none" stroke="#000" stroke-width="1.200"/><rect x="5.500" y="11" width="3" height="4" fill="#f0f000"/></svg>
<svg width="17" height="17" viewBox="0 0 17 17" style="position:absolute;left:557px;top:86px;overflow:visible;"><rect x="4" y="4.500" width="12" height="3.500" fill="#f0f000" stroke="#000" stroke-width="1"/><path d="M4 6.200h12" stroke="#000" stroke-width=".7" stroke-dasharray="1.500 1"/><rect x="5.500" y="10.500" width="3.500" height="6" fill="#f0f000" stroke="#000" stroke-width="1"/><path d="M2 16v-6M.5 11.500l1.500-2 1.500 2" fill="none" stroke="#1818c0" stroke-width="1.300"/><path d="M3 2.500h7M8 1l2 1.500-2 1.500" fill="none" stroke="#1818c0" stroke-width="1.300"/></svg>
<svg width="17" height="16" viewBox="0 0 17 16" style="position:absolute;left:579px;top:86px;overflow:visible;"><path d="M1.500 1.500h8.500l-3.500 6.500 3.500 6.500h-8.500z" fill="#d8d8d8" stroke="#a4a4a4" stroke-width="1.100"/><path d="M2 3l6 10M2 7l4 6M5 2l3 5" stroke="#a4a4a4" stroke-width=".8"/><rect x="9" y="6" width="7" height="5.500" fill="#c4c4c4" stroke="#a4a4a4" stroke-width="1"/><path d="M6.500 8.500h5" stroke="#a4a4a4" stroke-width="1.400"/></svg>
<svg width="16" height="16" viewBox="0 0 16 16" style="position:absolute;left:611px;top:87px;overflow:visible;"><rect x="1.500" y="1" width="3.500" height="14" fill="#fff" stroke="#1a1a8a" stroke-width="1.300"/><rect x="11" y="1" width="3.500" height="14" fill="#fff" stroke="#1a1a8a" stroke-width="1.300"/><path d="M5 10h6M5 12.500h6M7 8.500l-2 2.500 2 2.500M9 8.500l2 2.500-2 2.500" fill="none" stroke="#000" stroke-width="1"/></svg>
<div style="position:absolute;left:8px;top:142px;width:1251px;height:804px;background:#f0f0f0"></div>
<div style="position:absolute;left:9px;top:144px;width:97px;height:20px;box-sizing:border-box;background:#f1f1f1;border-top:1px solid #fff;border-left:1px solid #fff;border-right:1px solid #000;border-bottom:1px solid #000"></div>
<span id="t19" style="position:absolute;left:40.15px;top:148.24px;font:normal 12px/13.79px 'Liberation Sans', sans-serif;color:#000;white-space:pre;transform:scaleX(0.9252);transform-origin:0 0;">Basics</span>
<div style="position:absolute;left:9px;top:164px;width:97px;height:20px;box-sizing:border-box;background:#f1f1f1;border-top:1px solid #fff;border-left:1px solid #fff;border-right:1px solid #000;border-bottom:1px solid #000"></div>
<span id="t20" style="position:absolute;left:43.7px;top:168.24px;font:normal 12px/13.79px 'Liberation Sans', sans-serif;color:#000;white-space:pre;transform:scaleX(0.9924);transform-origin:0 0;">View</span>
<div style="position:absolute;left:9px;top:184px;width:97px;height:20px;box-sizing:border-box;background:#f1f1f1;border-top:1px solid #fff;border-left:1px solid #fff;border-right:1px solid #000;border-bottom:1px solid #000"></div>
<span id="t21" style="position:absolute;left:29.4px;top:188.24px;font:normal 12px/13.79px 'Liberation Sans', sans-serif;color:#000;white-space:pre;transform:scaleX(1.0550);transform-origin:0 0;">Modelling</span>
<div style="position:absolute;left:10px;top:205px;width:96px;height:20px;box-sizing:border-box;border:1px solid #6d6d6d;border-right:none;border-radius:4px 0 0 4px;background:linear-gradient(#d4d4d4,#ececec 45%,#f2f2f2)"></div>
<span id="t22" style="position:absolute;left:33.6px;top:210.04px;font:normal 12px/13.79px 'Liberation Sans', sans-serif;color:#000;white-space:pre;transform:scaleX(1.0921);transform-origin:0 0;">Modify</span>
<span id="t23" style="position:absolute;left:32.7px;top:231.04px;font:normal 12px/13.79px 'Liberation Sans', sans-serif;color:#000;white-space:pre;transform:scaleX(1.0179);transform-origin:0 0;">Wall</span>
<span id="t24" style="position:absolute;left:32.7px;top:253.04px;font:normal 12px/13.79px 'Liberation Sans', sans-serif;color:#000;white-space:pre;transform:scaleX(1.0225);transform-origin:0 0;">Door</span>
<span id="t25" style="position:absolute;left:32.7px;top:275.04px;font:normal 12px/13.79px 'Liberation Sans', sans-serif;color:#000;white-space:pre;transform:scaleX(1.0401);transform-origin:0 0;">Window</span>
<span id="t26" style="position:absolute;left:32.7px;top:297.04px;font:normal 12px/13.79px 'Liberation Sans', sans-serif;color:#000;white-space:pre;transform:scaleX(1.0397);transform-origin:0 0;">Column</span>
<span id="t27" style="position:absolute;left:32.7px;top:319.04px;font:normal 12px/13.79px 'Liberation Sans', sans-serif;color:#000;white-space:pre;transform:scaleX(1.0363);transform-origin:0 0;">Component</span>
<span id="t28" style="position:absolute;left:32.7px;top:341.04px;font:normal 12px/13.79px 'Liberation Sans', sans-serif;color:#000;white-space:pre;transform:scaleX(0.9672);transform-origin:0 0;">Roof »</span>
<span id="t29" style="position:absolute;left:32.7px;top:363.04px;font:normal 12px/13.79px 'Liberation Sans', sans-serif;color:#000;white-space:pre;">Floor</span>
<span id="t30" style="position:absolute;left:32.7px;top:385.04px;font:normal 12px/13.79px 'Liberation Sans', sans-serif;color:#000;white-space:pre;transform:scaleX(1.0085);transform-origin:0 0;">Ceiling</span>
<span id="t31" style="position:absolute;left:32.6px;top:407.04px;font:normal 12px/13.79px 'Liberation Sans', sans-serif;color:#000;white-space:pre;transform:scaleX(0.9320);transform-origin:0 0;">Stairs</span>
<span id="t32" style="position:absolute;left:32.6px;top:429.04px;font:normal 12px/13.79px 'Liberation Sans', sans-serif;color:#000;white-space:pre;">Railing</span>
<span id="t33" style="position:absolute;left:32.6px;top:451.04px;font:normal 12px/13.79px 'Liberation Sans', sans-serif;color:#000;white-space:pre;transform:scaleX(0.9808);transform-origin:0 0;">Ramp</span>
<span id="t34" style="position:absolute;left:32.6px;top:473.04px;font:normal 12px/13.79px 'Liberation Sans', sans-serif;color:#000;white-space:pre;transform:scaleX(1.0190);transform-origin:0 0;">Model Text...</span>
<span id="t35" style="position:absolute;left:32.6px;top:495.04px;font:normal 12px/13.79px 'Liberation Sans', sans-serif;color:#000;white-space:pre;transform:scaleX(0.9746);transform-origin:0 0;">Curtain Syster</span>
<span id="t36" style="position:absolute;left:32.6px;top:517.04px;font:normal 12px/13.79px 'Liberation Sans', sans-serif;color:#000;white-space:pre;transform:scaleX(0.9925);transform-origin:0 0;">Curtain Grid</span>
<span id="t37" style="position:absolute;left:32.6px;top:539.04px;font:normal 12px/13.79px 'Liberation Sans', sans-serif;color:#000;white-space:pre;transform:scaleX(1.0864);transform-origin:0 0;">Mullion</span>
<span id="t38" style="position:absolute;left:32.6px;top:561.04px;font:normal 12px/13.79px 'Liberation Sans', sans-serif;color:#000;white-space:pre;transform:scaleX(0.9569);transform-origin:0 0;">Host Sweep »</span>
<span id="t39" style="position:absolute;left:32.6px;top:583.04px;font:normal 12px/13.79px 'Liberation Sans', sans-serif;color:#9a9a9a;white-space:pre;transform:scaleX(0.9948);transform-origin:0 0;">Opening »</span>
<span id="t40" style="position:absolute;left:32.6px;top:605.04px;font:normal 12px/13.79px 'Liberation Sans', sans-serif;color:#000;white-space:pre;transform:scaleX(0.9512);transform-origin:0 0;">Decal...</span>
<span id="t41" style="position:absolute;left:32.6px;top:635.04px;font:normal 12px/13.79px 'Liberation Sans', sans-serif;color:#000;white-space:pre;transform:scaleX(0.9725);transform-origin:0 0;">Lines</span>
<span id="t42" style="position:absolute;left:32.6px;top:657.04px;font:normal 12px/13.79px 'Liberation Sans', sans-serif;color:#000;white-space:pre;transform:scaleX(1.0177);transform-origin:0 0;">Model Group</span>
<span id="t43" style="position:absolute;left:32.6px;top:679.04px;font:normal 12px/13.79px 'Liberation Sans', sans-serif;color:#000;white-space:pre;transform:scaleX(0.9494);transform-origin:0 0;">Create...</span>
<div style="position:absolute;left:12px;top:625px;width:92px;height:1px;background:#a0a0a0"></div>
<div style="position:absolute;left:12px;top:626px;width:92px;height:1px;background:#fdfdfd"></div>
<div style="position:absolute;left:9px;top:826px;width:97px;height:20px;box-sizing:border-box;background:#f1f1f1;border-top:1px solid #fff;border-left:1px solid #fff;border-right:1px solid #000;border-bottom:1px solid #000"></div>
<span id="t44" style="position:absolute;left:34.75px;top:830.04px;font:normal 12px/13.79px 'Liberation Sans', sans-serif;color:#000;white-space:pre;transform:scaleX(1.0349);transform-origin:0 0;">Drafting</span>
<div style="position:absolute;left:9px;top:846px;width:97px;height:20px;box-sizing:border-box;background:#f1f1f1;border-top:1px solid #fff;border-left:1px solid #fff;border-right:1px solid #000;border-bottom:1px solid #000"></div>
<span id="t45" style="position:absolute;left:29.3px;top:850.04px;font:normal 12px/13.79px 'Liberation Sans', sans-serif;color:#000;white-space:pre;transform:scaleX(0.9824);transform-origin:0 0;">Rendering</span>
<div style="position:absolute;left:9px;top:866px;width:97px;height:20px;box-sizing:border-box;background:#f1f1f1;border-top:1px solid #fff;border-left:1px solid #fff;border-right:1px solid #000;border-bottom:1px solid #000"></div>
<span id="t46" style="position:absolute;left:46.6px;top:870.04px;font:normal 12px/13.79px 'Liberation Sans', sans-serif;color:#000;white-space:pre;transform:scaleX(0.9571);transform-origin:0 0;">Site</span>
<div style="position:absolute;left:9px;top:886px;width:97px;height:20px;box-sizing:border-box;background:#f1f1f1;border-top:1px solid #fff;border-left:1px solid #fff;border-right:1px solid #000;border-bottom:1px solid #000"></div>
<span id="t47" style="position:absolute;left:34.2px;top:890.04px;font:normal 12px/13.79px 'Liberation Sans', sans-serif;color:#000;white-space:pre;">Massing</span>
<div style="position:absolute;left:9px;top:906px;width:97px;height:20px;box-sizing:border-box;background:#f1f1f1;border-top:1px solid #fff;border-left:1px solid #fff;border-right:1px solid #000;border-bottom:1px solid #000"></div>
<span id="t48" style="position:absolute;left:15.4px;top:910.04px;font:normal 12px/13.79px 'Liberation Sans', sans-serif;color:#000;white-space:pre;transform:scaleX(0.9857);transform-origin:0 0;">Room and Area</span>
<div style="position:absolute;left:9px;top:926px;width:97px;height:20px;box-sizing:border-box;background:#f1f1f1;border-top:1px solid #fff;border-left:1px solid #fff;border-right:1px solid #000;border-bottom:1px solid #000"></div>
<span id="t49" style="position:absolute;left:30.5px;top:930.04px;font:normal 12px/13.79px 'Liberation Sans', sans-serif;color:#000;white-space:pre;transform:scaleX(1.0125);transform-origin:0 0;">Structural</span>
<div style="position:absolute;left:106px;top:144px;width:6px;height:802px;background:#f8f8f8"></div>
<div style="position:absolute;left:112px;top:144px;width:1px;height:802px;background:#a2a2a2"></div>
<div style="position:absolute;left:113px;top:144px;width:1px;height:802px;background:#4e4e4e"></div>
<div style="position:absolute;left:114px;top:144px;width:1px;height:802px;background:#7a7a7a"></div>
<div style="position:absolute;left:115px;top:144px;width:148px;height:20px;background:linear-gradient(#c3d2e4,#d2deec 60%,#dce5f0)"></div>
<span id="t50" style="position:absolute;left:116.6px;top:148.24px;font:normal 12px/13.79px 'Liberation Sans', sans-serif;color:#3a4a60;white-space:pre;transform:scaleX(0.9958);transform-origin:0 0;">Project1 - Project bro...</span>
<div style="position:absolute;left:247px;top:148px;width:11px;height:11px;box-sizing:border-box;border:1px solid #7e8da3;border-radius:2px;background:#e4ecf7"></div>
<svg width="11" height="11" viewBox="0 0 11 11" style="position:absolute;left:247px;top:148px;overflow:visible;"><path d="M3 3l5 5M8 3l-5 5" stroke="#44536a" stroke-width="1.6"/></svg>
<div style="position:absolute;left:263px;top:144px;width:1px;height:802px;background:#4e4e4e"></div>
<div style="position:absolute;left:264px;top:144px;width:1px;height:802px;background:#8a8a8a"></div>
<div style="position:absolute;left:117px;top:163px;width:143px;height:782px;box-sizing:border-box;border:1px solid #6d6d6d;border-right-color:#c8c8c8;border-bottom-color:#c8c8c8;background:#fff"></div>
<div style="position:absolute;left:260px;top:164px;width:1px;height:781px;background:#e6e6e6"></div>
<div style="position:absolute;left:261px;top:164px;width:1px;height:781px;background:#f4f4f4"></div>
<div style="position:absolute;left:182px;top:278px;width:31px;height:14px;background:#e4e4e4"></div>
<span id="t51" style="position:absolute;left:160.7px;top:166.94px;font:normal 11px/12.64px 'Liberation Sans', sans-serif;color:#000;white-space:pre;transform:scaleX(0.9440);transform-origin:0 0;">Views (all)</span>
<span id="t52" style="position:absolute;left:164.7px;top:182.94px;font:normal 11px/12.64px 'Liberation Sans', sans-serif;color:#000;white-space:pre;transform:scaleX(0.9310);transform-origin:0 0;">Floor Plans</span>
<span id="t53" style="position:absolute;left:184.8px;top:198.94px;font:normal 11px/12.64px 'Liberation Sans', sans-serif;color:#000;white-space:pre;">Level 0</span>
<span id="t54" style="position:absolute;left:184.8px;top:214.94px;font:normal 11px/12.64px 'Liberation Sans', sans-serif;color:#000;white-space:pre;transform:scaleX(0.9751);transform-origin:0 0;">Level 1</span>
<span id="t55" style="position:absolute;left:184.8px;top:230.94px;font:normal 11px/12.64px 'Liberation Sans', sans-serif;color:#000;white-space:pre;transform:scaleX(0.9278);transform-origin:0 0;">Site</span>
<span id="t56" style="position:absolute;left:164.7px;top:246.94px;font:normal 11px/12.64px 'Liberation Sans', sans-serif;color:#000;white-space:pre;transform:scaleX(0.9423);transform-origin:0 0;">Ceiling Plans</span>
<span id="t57" style="position:absolute;left:164.7px;top:262.94px;font:normal 11px/12.64px 'Liberation Sans', sans-serif;color:#000;white-space:pre;transform:scaleX(0.9726);transform-origin:0 0;">3D Views</span>
<span id="t58" style="position:absolute;left:184.8px;top:278.94px;font:bold 11px/12.64px 'Liberation Sans', sans-serif;color:#000;white-space:pre;transform:scaleX(1.1359);transform-origin:0 0;">{3D}</span>
<span id="t59" style="position:absolute;left:164.7px;top:294.94px;font:normal 11px/12.64px 'Liberation Sans', sans-serif;color:#000;white-space:pre;transform:scaleX(0.9282);transform-origin:0 0;">Elevations (12mm Ci</span>
<span id="t60" style="position:absolute;left:160.7px;top:310.94px;font:normal 11px/12.64px 'Liberation Sans', sans-serif;color:#000;white-space:pre;transform:scaleX(0.9688);transform-origin:0 0;">Legends</span>
<span id="t61" style="position:absolute;left:160.7px;top:326.94px;font:normal 11px/12.64px 'Liberation Sans', sans-serif;color:#000;white-space:pre;transform:scaleX(0.9842);transform-origin:0 0;">Schedules/Quantitie</span>
<span id="t62" style="position:absolute;left:160.7px;top:342.94px;font:normal 11px/12.64px 'Liberation Sans', sans-serif;color:#000;white-space:pre;transform:scaleX(0.9454);transform-origin:0 0;">Sheets (all)</span>
<span id="t63" style="position:absolute;left:160.7px;top:358.94px;font:normal 11px/12.64px 'Liberation Sans', sans-serif;color:#000;white-space:pre;transform:scaleX(0.8986);transform-origin:0 0;">Families</span>
<span id="t64" style="position:absolute;left:160.7px;top:374.94px;font:normal 11px/12.64px 'Liberation Sans', sans-serif;color:#000;white-space:pre;transform:scaleX(0.9563);transform-origin:0 0;">Groups</span>
<span id="t65" style="position:absolute;left:160.7px;top:390.94px;font:normal 11px/12.64px 'Liberation Sans', sans-serif;color:#000;white-space:pre;transform:scaleX(0.9778);transform-origin:0 0;">Revit Links</span>
<svg width="143" height="420" viewBox="0 0 143 420" style="position:absolute;left:117px;top:0px;overflow:visible;left:0;top:0;"><path d="M133 173.5H139" stroke="#9a9a9a" stroke-width="1" stroke-dasharray="1 1"/><path d="M152 189.5H163" stroke="#9a9a9a" stroke-width="1" stroke-dasharray="1 1"/><path d="M166 205.5H183" stroke="#9a9a9a" stroke-width="1" stroke-dasharray="1 1"/><path d="M166 221.5H183" stroke="#9a9a9a" stroke-width="1" stroke-dasharray="1 1"/><path d="M166 237.5H183" stroke="#9a9a9a" stroke-width="1" stroke-dasharray="1 1"/><path d="M152 253.5H163" stroke="#9a9a9a" stroke-width="1" stroke-dasharray="1 1"/><path d="M152 269.5H163" stroke="#9a9a9a" stroke-width="1" stroke-dasharray="1 1"/><path d="M166 285.5H183" stroke="#9a9a9a" stroke-width="1" stroke-dasharray="1 1"/><path d="M152 301.5H163" stroke="#9a9a9a" stroke-width="1" stroke-dasharray="1 1"/><path d="M133 317.5H139" stroke="#9a9a9a" stroke-width="1" stroke-dasharray="1 1"/><path d="M133 333.5H139" stroke="#9a9a9a" stroke-width="1" stroke-dasharray="1 1"/><path d="M133 349.5H139" stroke="#9a9a9a" stroke-width="1" stroke-dasharray="1 1"/><path d="M133 365.5H139" stroke="#9a9a9a" stroke-width="1" stroke-dasharray="1 1"/><path d="M133 381.5H139" stroke="#9a9a9a" stroke-width="1" stroke-dasharray="1 1"/><path d="M128 397.5H139" stroke="#9a9a9a" stroke-width="1" stroke-dasharray="1 1"/><path d="M128.5 178V397" stroke="#9a9a9a" stroke-width="1" stroke-dasharray="1 1"/><path d="M147.5 178V301" stroke="#9a9a9a" stroke-width="1" stroke-dasharray="1 1"/><path d="M166.5 194V237" stroke="#9a9a9a" stroke-width="1" stroke-dasharray="1 1"/><path d="M166.5 274V285" stroke="#9a9a9a" stroke-width="1" stroke-dasharray="1 1"/></svg>
<div style="position:absolute;left:123.5px;top:169px;width:9px;height:9px;box-sizing:border-box;border:1px solid #919191;border-radius:1px;background:linear-gradient(135deg,#fff,#d8dce4)"></div>
<div style="position:absolute;left:125.5px;top:173px;width:5px;height:1px;background:#3a4660"></div>
<div style="position:absolute;left:143px;top:185px;width:9px;height:9px;box-sizing:border-box;border:1px solid #919191;border-radius:1px;background:linear-gradient(135deg,#fff,#d8dce4)"></div>
<div style="position:absolute;left:145px;top:189px;width:5px;height:1px;background:#3a4660"></div>
<div style="position:absolute;left:143px;top:249px;width:9px;height:9px;box-sizing:border-box;border:1px solid #919191;border-radius:1px;background:linear-gradient(135deg,#fff,#d8dce4)"></div>
<div style="position:absolute;left:145px;top:253px;width:5px;height:1px;background:#3a4660"></div>
<div style="position:absolute;left:147px;top:251px;width:1px;height:5px;background:#3a4660"></div>
<div style="position:absolute;left:143px;top:265px;width:9px;height:9px;box-sizing:border-box;border:1px solid #919191;border-radius:1px;background:linear-gradient(135deg,#fff,#d8dce4)"></div>
<div style="position:absolute;left:145px;top:269px;width:5px;height:1px;background:#3a4660"></div>
<div style="position:absolute;left:143px;top:297px;width:9px;height:9px;box-sizing:border-box;border:1px solid #919191;border-radius:1px;background:linear-gradient(135deg,#fff,#d8dce4)"></div>
<div style="position:absolute;left:145px;top:301px;width:5px;height:1px;background:#3a4660"></div>
<div style="position:absolute;left:147px;top:299px;width:1px;height:5px;background:#3a4660"></div>
<div style="position:absolute;left:123.5px;top:313px;width:9px;height:9px;box-sizing:border-box;border:1px solid #919191;border-radius:1px;background:linear-gradient(135deg,#fff,#d8dce4)"></div>
<div style="position:absolute;left:125.5px;top:317px;width:5px;height:1px;background:#3a4660"></div>
<div style="position:absolute;left:127.5px;top:315px;width:1px;height:5px;background:#3a4660"></div>
<div style="position:absolute;left:123.5px;top:329px;width:9px;height:9px;box-sizing:border-box;border:1px solid #919191;border-radius:1px;background:linear-gradient(135deg,#fff,#d8dce4)"></div>
<div style="position:absolute;left:125.5px;top:333px;width:5px;height:1px;background:#3a4660"></div>
<div style="position:absolute;left:127.5px;top:331px;width:1px;height:5px;background:#3a4660"></div>
<div style="position:absolute;left:123.5px;top:345px;width:9px;height:9px;box-sizing:border-box;border:1px solid #919191;border-radius:1px;background:linear-gradient(135deg,#fff,#d8dce4)"></div>
<div style="position:absolute;left:125.5px;top:349px;width:5px;height:1px;background:#3a4660"></div>
<div style="position:absolute;left:127.5px;top:347px;width:1px;height:5px;background:#3a4660"></div>
<div style="position:absolute;left:123.5px;top:361px;width:9px;height:9px;box-sizing:border-box;border:1px solid #919191;border-radius:1px;background:linear-gradient(135deg,#fff,#d8dce4)"></div>
<div style="position:absolute;left:125.5px;top:365px;width:5px;height:1px;background:#3a4660"></div>
<div style="position:absolute;left:127.5px;top:363px;width:1px;height:5px;background:#3a4660"></div>
<div style="position:absolute;left:123.5px;top:377px;width:9px;height:9px;box-sizing:border-box;border:1px solid #919191;border-radius:1px;background:linear-gradient(135deg,#fff,#d8dce4)"></div>
<div style="position:absolute;left:125.5px;top:381px;width:5px;height:1px;background:#3a4660"></div>
<div style="position:absolute;left:127.5px;top:379px;width:1px;height:5px;background:#3a4660"></div>
<div style="position:absolute;left:259px;top:165px;width:4px;height:240px;background:#fff"></div>
<div style="position:absolute;left:260px;top:164px;width:1px;height:300px;background:#e6e6e6"></div>
<div style="position:absolute;left:261px;top:164px;width:1px;height:300px;background:#f4f4f4"></div>
<div style="position:absolute;left:262px;top:164px;width:1px;height:300px;background:#f0f0f0"></div>
<div style="position:absolute;left:118px;top:927px;width:141px;height:17px;background:#f0f0f0"></div>
<div style="position:absolute;left:137px;top:928px;width:88px;height:15px;box-sizing:border-box;border:1px solid #979797;border-radius:2px;background:linear-gradient(#f3f3f3,#e6e6e6 48%,#d2d2d2 52%,#c8c8c8)"></div>
<svg width="141" height="17" viewBox="0 0 141 17" style="position:absolute;left:118px;top:927px;overflow:visible;"><path d="M10 5l-4 3.500 4 3.500z" fill="#404040"/><path d="M131 5l4 3.500-4 3.500z" fill="#404040"/><path d="M60.500 5v7M62.500 5v7M64.500 5v7" stroke="#555" stroke-width="1"/></svg>
<svg width="13" height="17" viewBox="0 0 13 17" style="position:absolute;left:17px;top:208px;overflow:visible;"><path d="M1.500 1v12l3-2.500 2 4.500 2-1-2-4.500h4z" fill="#fff" stroke="#16167a" stroke-width="1.200" stroke-linejoin="miter"/></svg>
<svg width="16" height="17" viewBox="0 0 16 17" style="position:absolute;left:14px;top:228px;overflow:visible;"><defs><pattern id="brk" width="2" height="2" patternUnits="userSpaceOnUse"><rect width="2" height="2" fill="#fff"/><rect width="1" height="1" fill="#e02020"/><rect x="1" y="1" width="1" height="1" fill="#e02020"/></pattern></defs><path d="M1.500 2.500l2.500-1.500 2 3.500v11l-4.500-4z" fill="#8a1010" stroke="#000" stroke-width="1"/><path d="M6 4.500l2-2.500 2.500 1.500 3.500-2v9l-8 5z" fill="url(#brk)" stroke="#000" stroke-width="1"/></svg>
<svg width="12" height="18" viewBox="0 0 12 18" style="position:absolute;left:15px;top:250px;overflow:visible;"><path d="M2 2.500l8-1.500v12l-3 1" fill="#9a9a9a" stroke="#000" stroke-width="1.100"/><path d="M2 2.500l5 3v11l-5-3.500z" fill="#f4f080" stroke="#000" stroke-width="1.100"/><circle cx="5.500" cy="10.500" r=".8" fill="#000"/></svg>
<svg width="13" height="18" viewBox="0 0 13 18" style="position:absolute;left:15px;top:272px;overflow:visible;"><path d="M2 5l9-3.500v10.500l-9 4z" fill="#fff" stroke="#000" stroke-width="1.300"/><path d="M6.500 3.300v11M2 10.500l9-4" stroke="#000" stroke-width="1.200"/></svg>
<svg width="13" height="17" viewBox="0 0 13 17" style="position:absolute;left:14px;top:294px;overflow:visible;"><path d="M6.500 2.500v11c0 1.500 4 1.500 4 0v-11" fill="#fff" stroke="#16167a" stroke-width="1.200"/><ellipse cx="8.500" cy="2.500" rx="2" ry="1.200" fill="#fff" stroke="#16167a" stroke-width="1.100"/><path d="M1.500 9.500l4.500 4.500" stroke="#8a8a8a" stroke-width="2.200"/><path d="M9 5v1M9 8v1M9 11v1" stroke="#16167a" stroke-width=".8"/></svg>
<svg width="16" height="18" viewBox="0 0 16 18" style="position:absolute;left:13px;top:316px;overflow:visible;"><path d="M4.500 1.500h4l1 2.500v5.500l4 1v5.500M4.500 1.500l-1 4 1.500 4v6M5 9.500l4.500 0M9.500 10v5M5 12l8.500-.5" fill="none" stroke="#16167a" stroke-width="1.200"/><path d="M1 14.500h4l1.500 2.500h-5.500z" fill="#707070"/></svg>
<svg width="17" height="18" viewBox="0 0 17 18" style="position:absolute;left:13px;top:338px;overflow:visible;"><path d="M1 7.500l7.500-6.500 7.500 7-6 3.500z" fill="#f8f4a0" stroke="#000" stroke-width="1.100"/><path d="M3.500 9v4.500l6 3 5-3.500v-4.500M9.500 11.500v5" fill="#fff" stroke="#000" stroke-width="1.100"/><path d="M3.500 9l6 2.500 5-3v4.500l-5 3.500-6-3z" fill="#fff"/><path d="M3.500 9v4.500l6 3 5-3.500v-4.500M9.500 11.500v5M1 7.500l9 4 6-3.500" fill="none" stroke="#000" stroke-width="1.100"/></svg>
<svg width="17" height="17" viewBox="0 0 17 17" style="position:absolute;left:13px;top:360px;overflow:visible;"><defs><pattern id="chk" width="5" height="5" patternUnits="userSpaceOnUse"><rect width="5" height="5" fill="#d8e8ff"/><rect width="2.500" height="2.500" fill="#2848d0"/><rect x="2.500" y="2.500" width="2.500" height="2.500" fill="#2848d0"/></pattern></defs><rect x="1.500" y="1.500" width="14" height="14" fill="url(#chk)" stroke="#16167a" stroke-width="1.500"/></svg>
<svg width="17" height="17" viewBox="0 0 17 17" style="position:absolute;left:13px;top:382px;overflow:visible;"><rect x="10" y="4" width="3.500" height="5" fill="#f0f000"/><path d="M1 1.500h15.500M1 9h15.500M1 15.500h15.500M2.500 1v15M6 1v15M9.800 1v15M13.500 1v15" fill="none" stroke="#000" stroke-width="1.300"/></svg>
<svg width="16" height="16" viewBox="0 0 16 16" style="position:absolute;left:14px;top:405px;overflow:visible;"><path d="M1.500 8.500l3.500-2v-2.500l3.500-2 5.500 1.500v3l-3.500 2v3l-4 2.500-5-1.500z" fill="#fff" stroke="#16167a" stroke-width="1.300"/><path d="M5 6.500l5 1.500 3.500-2M5 4l4.500 1.500M1.500 8.500l5 1.500 4-2M6.500 10v4" fill="none" stroke="#16167a" stroke-width="1.100"/></svg>
<svg width="18" height="17" viewBox="0 0 18 17" style="position:absolute;left:12px;top:427px;overflow:visible;"><path d="M.5 3h17M.5 6.200h17M.5 9.400h17M.5 12.600h17" stroke="#1818a0" stroke-width="1.500"/><path d="M3.500 1v15M14 1v15" stroke="#1818a0" stroke-width="1.500"/></svg>
<svg width="17" height="17" viewBox="0 0 17 17" style="position:absolute;left:13px;top:448px;overflow:visible;"><path d="M1.500 9.500l9-8 5 2.500v6l-8 5.500z" fill="#50a8c0" stroke="#16167a" stroke-width="1.200"/><path d="M1.500 9.500l6 6M4 8.500l2-1 2 2 2-1 2 2" fill="none" stroke="#e0f4f8" stroke-width="1.300"/><path d="M7.500 15.500l8-5.500" stroke="#16167a" stroke-width="1"/></svg>
<span style="position:absolute;left:12.500px;top:470px;font:bold 17px/17px 'Liberation Serif',serif;color:#000;transform:scaleX(1.02);transform-origin:0 0">M</span>
<svg width="18" height="17" viewBox="0 0 18 17" style="position:absolute;left:12px;top:492px;overflow:visible;"><path d="M1 10l8-8.500 8 5.500-8.500 9z" fill="#fff" stroke="#000" stroke-width="1.200"/><path d="M5 5.700l7.800 5.800M4.500 13l8.500-9" stroke="#000" stroke-width="1.100"/></svg>
<svg width="17" height="15" viewBox="0 0 17 15" style="position:absolute;left:13px;top:515px;overflow:visible;"><rect x="1" y="1" width="14.500" height="12.500" fill="#fff" stroke="#000" stroke-width="1.400"/><path d="M8.300 1v12.500M1 7.200h14.500" stroke="#000" stroke-width="1.100" stroke-dasharray="1.500 1.200"/></svg>
<svg width="17" height="15" viewBox="0 0 17 15" style="position:absolute;left:13px;top:537px;overflow:visible;"><rect x=".5" y=".5" width="15.500" height="14" fill="#103070"/><rect x="2" y="2.500" width="5" height="2.200" fill="#70e0f8"/><rect x="9" y="2.500" width="5.500" height="2.200" fill="#70e0f8"/><rect x="2" y="6.500" width="5" height="2.200" fill="#d0f4ff"/><rect x="9" y="6.500" width="5.500" height="2.200" fill="#d0f4ff"/><rect x="2" y="10.500" width="5" height="2.200" fill="#70e0f8"/><rect x="9" y="10.500" width="5.500" height="2.200" fill="#70e0f8"/></svg>
<svg width="15" height="16" viewBox="0 0 15 16" style="position:absolute;left:14px;top:558px;overflow:visible;"><path d="M1 4l6.500 3 6.500-4v8l-6.500 4.500-6.500-3.500z" fill="#208078" stroke="#083838" stroke-width="1"/><path d="M1 7l6.500 3.500 6.500-4.500v2.500l-6.500 4.500-6.500-3.500z" fill="#e8e040"/><path d="M1 4l3-2.500 3.500 2.500 3.500-3 3 2" fill="#30a090" stroke="#083838" stroke-width="1"/></svg>
<svg width="15" height="17" viewBox="0 0 15 17" style="position:absolute;left:14px;top:580px;overflow:visible;"><path d="M2 5l8-3.500 3 1v9l-8 4-3-1.500z" fill="#d0d0d0" stroke="#a8a8a8" stroke-width="1.200"/><path d="M5 6.500l5-2v5l-5 2.500z" fill="#f0f0f0" stroke="#a8a8a8" stroke-width="1"/><path d="M5 15.500v-9M2 5l3 1.500" stroke="#a8a8a8" stroke-width="1"/></svg>
<svg width="17" height="14" viewBox="0 0 17 14" style="position:absolute;left:13px;top:603px;overflow:visible;"><rect x=".8" y=".8" width="14.800" height="12.400" fill="#fff" stroke="#000" stroke-width="1.500"/><rect x="3" y="3" width="10.500" height="8" fill="#30d8d0"/><path d="M3 11l4-4 2 1.500 2-3 2.500 3v2.500z" fill="#209020"/><path d="M3 11l3-3 1.500 1z" fill="#f0f0a0"/></svg>
<svg width="18" height="16" viewBox="0 0 18 16" style="position:absolute;left:12px;top:632px;overflow:visible;"><path d="M3.500 1.500v13M1.500 4l2-2.500 2 2.500M1.500 12l2 2.500 2-2.500" fill="none" stroke="#000" stroke-width="1.100"/><path d="M8 2c0 7 3 11 9 12" fill="none" stroke="#000" stroke-width="1.200"/><circle cx="8" cy="2" r="1.100" fill="#1818a0"/><circle cx="16.500" cy="14" r="1.100" fill="#1818a0"/></svg>
<svg width="17" height="17" viewBox="0 0 17 17" style="position:absolute;left:13px;top:654px;overflow:visible;"><rect x="1" y="1" width="14.500" height="14.500" fill="#f4f4f4" stroke="#000060" stroke-width="1.300" stroke-dasharray="2.500 1.500"/><rect x="3.500" y="3.500" width="3" height="3" fill="#70d040" stroke="#104010" stroke-width=".8"/><rect x="3.500" y="9.500" width="3.500" height="3.500" fill="#fff" stroke="#000" stroke-width=".9"/><rect x="9.500" y="3" width="3.500" height="10.500" fill="#20d0d8" stroke="#004048" stroke-width=".8"/></svg>
<svg width="17" height="17" viewBox="0 0 17 17" style="position:absolute;left:13px;top:677px;overflow:visible;"><path d="M3 14v-9l3-3.500 3 3v9" fill="#fff" stroke="#000" stroke-width="1.200"/><path d="M3 9l6-2" stroke="#000" stroke-width="1"/><path d="M7.500 11l7-8 1.500 1.500-7 8-2.500 1z" fill="#f0e020" stroke="#000" stroke-width="1"/><path d="M1 12.500v4M1 14h5M11 11v5.500" stroke="#505050" stroke-width="1.200"/></svg>
<svg width="18" height="15" viewBox="0 0 18 15" style="position:absolute;left:138px;top:166px;overflow:visible;"><path d="M1 7.500c3.500-5.500 12.500-5.500 16 0c-3.500 5-12.500 5-16 0z" fill="#fff" stroke="#000" stroke-width="1.300"/><circle cx="9" cy="7" r="3.300" fill="#000"/><circle cx="9.800" cy="6.300" r="1" fill="#aaa"/></svg>
<svg width="17" height="16" viewBox="0 0 17 16" style="position:absolute;left:138px;top:309px;overflow:visible;"><rect x="1" y="1" width="15" height="14" fill="#fff" stroke="#000" stroke-width="1.100"/><rect x="3" y="3.500" width="3" height="2.500" fill="#000"/><rect x="3" y="8" width="3" height="2.500" fill="#000"/><path d="M8 4.500h6M8 9h4M3 12.500h8" stroke="#000" stroke-width="1.100" stroke-dasharray="2 1"/></svg>
<svg width="17" height="16" viewBox="0 0 17 16" style="position:absolute;left:138px;top:325px;overflow:visible;"><rect x="1" y="1" width="15" height="14" fill="#fff" stroke="#000" stroke-width="1.100"/><path d="M1 4.500h15M1 8h15M1 11.500h15M6 4.500v10.500M11 4.500v10.500" stroke="#000" stroke-width="1.100"/></svg>
<svg width="17" height="14" viewBox="0 0 17 14" style="position:absolute;left:138px;top:342px;overflow:visible;"><rect x="1" y="1" width="15" height="12" fill="#fff" stroke="#000" stroke-width="1.100"/><path d="M12 1v12M12 9.500h4" stroke="#000" stroke-width="1.100"/></svg>
<svg width="17" height="16" viewBox="0 0 17 16" style="position:absolute;left:138px;top:357px;overflow:visible;"><path d="M2 6v8M5 6v8M2 14h3M2 6c0-2 3-2 3 0" fill="none" stroke="#000" stroke-width="1.100"/><path d="M8 4l7-2.500v8l-7 3z" fill="#fff" stroke="#000" stroke-width="1.100"/><path d="M11.500 2.800v8.500M8 8.500l7-3" stroke="#000" stroke-width="1"/></svg>
<svg width="17" height="17" viewBox="0 0 17 17" style="position:absolute;left:138px;top:372px;overflow:visible;"><rect x="1" y="1" width="15" height="15" fill="#fff" stroke="#000" stroke-width="1.200" stroke-dasharray="2.500 1.500"/><rect x="3.500" y="4" width="3.500" height="9" fill="#fff" stroke="#000" stroke-width="1"/><rect x="9.500" y="4" width="3.500" height="9" fill="#fff" stroke="#000" stroke-width="1"/></svg>
<svg width="17" height="13" viewBox="0 0 17 13" style="position:absolute;left:138px;top:391px;overflow:visible;"><rect x="1" y="1.500" width="14.500" height="9.500" fill="#fff" stroke="#000" stroke-width="1.100"/></svg>
<div style="position:absolute;left:271px;top:142px;width:988px;height:804px;background:#f0f0f0"></div>
<div style="position:absolute;left:271px;top:142px;width:988px;height:1px;background:#a8a8a8"></div>
<div style="position:absolute;left:271px;top:143px;width:988px;height:1px;background:#6a6a6a"></div>
<div style="position:absolute;left:271px;top:143px;width:1px;height:803px;background:#6a6a6a"></div>
<svg width="969" height="783" viewBox="0 0 969 783" style="position:absolute;left:272px;top:144px;background:#fff;overflow:hidden"><defs><linearGradient id="gbal" gradientUnits="userSpaceOnUse" x1="0" y1="0" x2="5" y2="5" spreadMethod="pad"><stop offset="0" stop-color="#9a9a9a"/><stop offset="0.35" stop-color="#d2d2d2"/><stop offset="0.6" stop-color="#bcbcbc"/><stop offset="1" stop-color="#888888"/></linearGradient><linearGradient id="gface" x1="0" y1="0" x2="1" y2="1"><stop offset="0" stop-color="#b4b4b4"/><stop offset="0.5" stop-color="#bdbdbd"/><stop offset="1" stop-color="#c4c4c4"/></linearGradient><linearGradient id="griser" x1="0" y1="0" x2="1" y2="1"><stop offset="0" stop-color="#5e5e5e"/><stop offset="1" stop-color="#4a4a4a"/></linearGradient></defs>
<polygon points="312.39,-24.00 324.19,-24.00 846.60,566.32 846.60,579.65" fill="#c6c6c6" stroke="#000" stroke-width="1.45" stroke-linejoin="miter" /><polygon points="324.19,-24.00 330.19,-24.00 851.20,564.74 851.20,578.07 846.60,579.65 846.60,566.32" fill="#747474" stroke="#000" stroke-width="1.45" stroke-linejoin="miter" /><polygon points="846.60,566.32 851.20,564.74 851.20,578.07 846.60,579.65" fill="#222222" stroke="#000" stroke-width="1.45" stroke-linejoin="miter" />
<polygon points="254.80,46.18 846.00,714.23 846.00,757.23 254.80,89.18" fill="url(#gface)" stroke="#000" stroke-width="1.45" stroke-linejoin="miter" />
<polygon points="254.80,46.18 260.40,46.38 851.60,714.35 846.00,714.23" fill="#767676" stroke="#000" stroke-width="1.45" stroke-linejoin="miter" />
<polygon points="846.00,714.23 851.60,714.35 851.60,759.20 846.00,761.60" fill="#222222" stroke="#000" stroke-width="1.45" stroke-linejoin="miter" />
<g transform="translate(254.40,45.30)"><polygon points="0.00,0.00 63.80,-63.80 68.70,-58.90 4.90,4.90" fill="url(#gbal)" stroke="none"/><line x1="0" y1="0" x2="63.80" y2="-63.80" stroke="#000" stroke-width="1.45"/><line x1="4.90" y1="4.90" x2="68.70" y2="-58.90" stroke="#000" stroke-width="1.45"/><line x1="63.80" y1="-63.80" x2="65.60" y2="-65.60" stroke="#000" stroke-width="1.2"/></g>
<g transform="translate(322.20,121.20)"><polygon points="0.00,0.00 63.80,-63.80 68.70,-58.90 4.90,4.90" fill="url(#gbal)" stroke="none"/><line x1="0" y1="0" x2="63.80" y2="-63.80" stroke="#000" stroke-width="1.45"/><line x1="4.90" y1="4.90" x2="68.70" y2="-58.90" stroke="#000" stroke-width="1.45"/><line x1="63.80" y1="-63.80" x2="65.60" y2="-65.60" stroke="#000" stroke-width="1.2"/></g>
<g transform="translate(397.10,205.80)"><polygon points="0.00,0.00 63.80,-63.80 68.70,-58.90 4.90,4.90" fill="url(#gbal)" stroke="none"/><line x1="0" y1="0" x2="63.80" y2="-63.80" stroke="#000" stroke-width="1.45"/><line x1="4.90" y1="4.90" x2="68.70" y2="-58.90" stroke="#000" stroke-width="1.45"/><line x1="63.80" y1="-63.80" x2="65.60" y2="-65.60" stroke="#000" stroke-width="1.2"/></g>
<g transform="translate(472.00,290.40)"><polygon points="0.00,0.00 63.80,-63.80 68.70,-58.90 4.90,4.90" fill="url(#gbal)" stroke="none"/><line x1="0" y1="0" x2="63.80" y2="-63.80" stroke="#000" stroke-width="1.45"/><line x1="4.90" y1="4.90" x2="68.70" y2="-58.90" stroke="#000" stroke-width="1.45"/><line x1="63.80" y1="-63.80" x2="65.60" y2="-65.60" stroke="#000" stroke-width="1.2"/></g>
<g transform="translate(546.90,375.00)"><polygon points="0.00,0.00 63.80,-63.80 68.70,-58.90 4.90,4.90" fill="url(#gbal)" stroke="none"/><line x1="0" y1="0" x2="63.80" y2="-63.80" stroke="#000" stroke-width="1.45"/><line x1="4.90" y1="4.90" x2="68.70" y2="-58.90" stroke="#000" stroke-width="1.45"/><line x1="63.80" y1="-63.80" x2="65.60" y2="-65.60" stroke="#000" stroke-width="1.2"/></g>
<g transform="translate(621.80,459.60)"><polygon points="0.00,0.00 63.80,-63.80 68.70,-58.90 4.90,4.90" fill="url(#gbal)" stroke="none"/><line x1="0" y1="0" x2="63.80" y2="-63.80" stroke="#000" stroke-width="1.45"/><line x1="4.90" y1="4.90" x2="68.70" y2="-58.90" stroke="#000" stroke-width="1.45"/><line x1="63.80" y1="-63.80" x2="65.60" y2="-65.60" stroke="#000" stroke-width="1.2"/></g>
<g transform="translate(696.70,544.20)"><polygon points="0.00,0.00 63.80,-63.80 68.70,-58.90 4.90,4.90" fill="url(#gbal)" stroke="none"/><line x1="0" y1="0" x2="63.80" y2="-63.80" stroke="#000" stroke-width="1.45"/><line x1="4.90" y1="4.90" x2="68.70" y2="-58.90" stroke="#000" stroke-width="1.45"/><line x1="63.80" y1="-63.80" x2="65.60" y2="-65.60" stroke="#000" stroke-width="1.2"/></g>
<g transform="translate(771.60,628.80)"><polygon points="0.00,0.00 63.80,-63.80 68.70,-58.90 4.90,4.90" fill="url(#gbal)" stroke="none"/><line x1="0" y1="0" x2="63.80" y2="-63.80" stroke="#000" stroke-width="1.45"/><line x1="4.90" y1="4.90" x2="68.70" y2="-58.90" stroke="#000" stroke-width="1.45"/><line x1="63.80" y1="-63.80" x2="65.60" y2="-65.60" stroke="#000" stroke-width="1.2"/></g>
<g transform="translate(846.50,713.40)"><polygon points="0.00,0.00 65.30,-65.30 70.20,-60.40 4.90,4.90" fill="url(#gbal)" stroke="none"/><line x1="0" y1="0" x2="65.30" y2="-65.30" stroke="#000" stroke-width="1.45"/><line x1="4.90" y1="4.90" x2="70.20" y2="-60.40" stroke="#000" stroke-width="1.45"/><ellipse cx="67.75" cy="-62.85" rx="3.1" ry="2.3" transform="rotate(45 67.75 -62.85)" fill="#8a8a8a" stroke="#000" stroke-width="1.2"/></g>
<polygon points="195.00,92.40 253.60,61.60 253.60,89.60 208.00,114.20" fill="#525252" stroke="#000" stroke-width="1.45" stroke-linejoin="miter" />
<polygon points="254.50,89.35 287.40,93.75 222.40,128.85 209.50,113.65" fill="#c9a55f" stroke="#000" stroke-width="1.45" stroke-linejoin="miter" />
<polygon points="287.40,93.75 286.60,98.05 221.60,133.15 222.40,128.85" fill="#8c7c56" stroke="#000" stroke-width="1.45" stroke-linejoin="miter" />
<polygon points="286.40,98.05 286.40,126.69 221.40,161.79 221.40,133.15" fill="url(#griser)" stroke="#000" stroke-width="1.45" stroke-linejoin="miter" />
<line x1="286.40" y1="94.75" x2="286.40" y2="126.69" stroke="#000" stroke-width="2.0"/>
<polygon points="287.40,126.69 320.30,131.09 255.30,166.19 242.40,150.99" fill="#c9a55f" stroke="#000" stroke-width="1.45" stroke-linejoin="miter" />
<polygon points="320.30,131.09 319.50,135.39 254.50,170.49 255.30,166.19" fill="#8c7c56" stroke="#000" stroke-width="1.45" stroke-linejoin="miter" />
<polygon points="319.30,135.39 319.30,164.03 254.30,199.13 254.30,170.49" fill="url(#griser)" stroke="#000" stroke-width="1.45" stroke-linejoin="miter" />
<line x1="319.30" y1="132.09" x2="319.30" y2="164.03" stroke="#000" stroke-width="2.0"/>
<polygon points="320.30,164.03 353.20,168.43 288.20,203.53 275.30,188.33" fill="#c9a55f" stroke="#000" stroke-width="1.45" stroke-linejoin="miter" />
<polygon points="353.20,168.43 352.40,172.73 287.40,207.83 288.20,203.53" fill="#8c7c56" stroke="#000" stroke-width="1.45" stroke-linejoin="miter" />
<polygon points="352.20,172.73 352.20,201.37 287.20,236.47 287.20,207.83" fill="url(#griser)" stroke="#000" stroke-width="1.45" stroke-linejoin="miter" />
<line x1="352.20" y1="169.43" x2="352.20" y2="201.37" stroke="#000" stroke-width="2.0"/>
<polygon points="353.20,201.37 386.10,205.77 321.10,240.87 308.20,225.67" fill="#c9a55f" stroke="#000" stroke-width="1.45" stroke-linejoin="miter" />
<polygon points="386.10,205.77 385.30,210.07 320.30,245.17 321.10,240.87" fill="#8c7c56" stroke="#000" stroke-width="1.45" stroke-linejoin="miter" />
<polygon points="385.10,210.07 385.10,238.71 320.10,273.81 320.10,245.17" fill="url(#griser)" stroke="#000" stroke-width="1.45" stroke-linejoin="miter" />
<line x1="385.10" y1="206.77" x2="385.10" y2="238.71" stroke="#000" stroke-width="2.0"/>
<polygon points="386.10,238.71 419.00,243.11 354.00,278.21 341.10,263.01" fill="#c9a55f" stroke="#000" stroke-width="1.45" stroke-linejoin="miter" />
<polygon points="419.00,243.11 418.20,247.41 353.20,282.51 354.00,278.21" fill="#8c7c56" stroke="#000" stroke-width="1.45" stroke-linejoin="miter" />
<polygon points="418.00,247.41 418.00,276.05 353.00,311.15 353.00,282.51" fill="url(#griser)" stroke="#000" stroke-width="1.45" stroke-linejoin="miter" />
<line x1="418.00" y1="244.11" x2="418.00" y2="276.05" stroke="#000" stroke-width="2.0"/>
<polygon points="419.00,276.05 451.90,280.45 386.90,315.55 374.00,300.35" fill="#c9a55f" stroke="#000" stroke-width="1.45" stroke-linejoin="miter" />
<polygon points="451.90,280.45 451.10,284.75 386.10,319.85 386.90,315.55" fill="#8c7c56" stroke="#000" stroke-width="1.45" stroke-linejoin="miter" />
<polygon points="450.90,284.75 450.90,313.39 385.90,348.49 385.90,319.85" fill="url(#griser)" stroke="#000" stroke-width="1.45" stroke-linejoin="miter" />
<line x1="450.90" y1="281.45" x2="450.90" y2="313.39" stroke="#000" stroke-width="2.0"/>
<polygon points="451.90,313.39 484.80,317.79 419.80,352.89 406.90,337.69" fill="#c9a55f" stroke="#000" stroke-width="1.45" stroke-linejoin="miter" />
<polygon points="484.80,317.79 484.00,322.09 419.00,357.19 419.80,352.89" fill="#8c7c56" stroke="#000" stroke-width="1.45" stroke-linejoin="miter" />
<polygon points="483.80,322.09 483.80,350.73 418.80,385.83 418.80,357.19" fill="url(#griser)" stroke="#000" stroke-width="1.45" stroke-linejoin="miter" />
<line x1="483.80" y1="318.79" x2="483.80" y2="350.73" stroke="#000" stroke-width="2.0"/>
<polygon points="484.80,350.73 517.70,355.13 452.70,390.23 439.80,375.03" fill="#c9a55f" stroke="#000" stroke-width="1.45" stroke-linejoin="miter" />
<polygon points="517.70,355.13 516.90,359.43 451.90,394.53 452.70,390.23" fill="#8c7c56" stroke="#000" stroke-width="1.45" stroke-linejoin="miter" />
<polygon points="516.70,359.43 516.70,388.07 451.70,423.17 451.70,394.53" fill="url(#griser)" stroke="#000" stroke-width="1.45" stroke-linejoin="miter" />
<line x1="516.70" y1="356.13" x2="516.70" y2="388.07" stroke="#000" stroke-width="2.0"/>
<polygon points="517.70,388.07 550.60,392.47 485.60,427.57 472.70,412.37" fill="#c9a55f" stroke="#000" stroke-width="1.45" stroke-linejoin="miter" />
<polygon points="550.60,392.47 549.80,396.77 484.80,431.87 485.60,427.57" fill="#8c7c56" stroke="#000" stroke-width="1.45" stroke-linejoin="miter" />
<polygon points="549.60,396.77 549.60,425.41 484.60,460.51 484.60,431.87" fill="url(#griser)" stroke="#000" stroke-width="1.45" stroke-linejoin="miter" />
<line x1="549.60" y1="393.47" x2="549.60" y2="425.41" stroke="#000" stroke-width="2.0"/>
<polygon points="550.60,425.41 583.50,429.81 518.50,464.91 505.60,449.71" fill="#c9a55f" stroke="#000" stroke-width="1.45" stroke-linejoin="miter" />
<polygon points="583.50,429.81 582.70,434.11 517.70,469.21 518.50,464.91" fill="#8c7c56" stroke="#000" stroke-width="1.45" stroke-linejoin="miter" />
<polygon points="582.50,434.11 582.50,462.75 517.50,497.85 517.50,469.21" fill="url(#griser)" stroke="#000" stroke-width="1.45" stroke-linejoin="miter" />
<line x1="582.50" y1="430.81" x2="582.50" y2="462.75" stroke="#000" stroke-width="2.0"/>
<polygon points="583.50,462.75 616.40,467.15 551.40,502.25 538.50,487.05" fill="#c9a55f" stroke="#000" stroke-width="1.45" stroke-linejoin="miter" />
<polygon points="616.40,467.15 615.60,471.45 550.60,506.55 551.40,502.25" fill="#8c7c56" stroke="#000" stroke-width="1.45" stroke-linejoin="miter" />
<polygon points="615.40,471.45 615.40,500.09 550.40,535.19 550.40,506.55" fill="url(#griser)" stroke="#000" stroke-width="1.45" stroke-linejoin="miter" />
<line x1="615.40" y1="468.15" x2="615.40" y2="500.09" stroke="#000" stroke-width="2.0"/>
<polygon points="616.40,500.09 649.30,504.49 584.30,539.59 571.40,524.39" fill="#c9a55f" stroke="#000" stroke-width="1.45" stroke-linejoin="miter" />
<polygon points="649.30,504.49 648.50,508.79 583.50,543.89 584.30,539.59" fill="#8c7c56" stroke="#000" stroke-width="1.45" stroke-linejoin="miter" />
<polygon points="648.30,508.79 648.30,537.43 583.30,572.53 583.30,543.89" fill="url(#griser)" stroke="#000" stroke-width="1.45" stroke-linejoin="miter" />
<line x1="648.30" y1="505.49" x2="648.30" y2="537.43" stroke="#000" stroke-width="2.0"/>
<polygon points="649.30,537.43 682.20,541.83 617.20,576.93 604.30,561.73" fill="#c9a55f" stroke="#000" stroke-width="1.45" stroke-linejoin="miter" />
<polygon points="682.20,541.83 681.40,546.13 616.40,581.23 617.20,576.93" fill="#8c7c56" stroke="#000" stroke-width="1.45" stroke-linejoin="miter" />
<polygon points="681.20,546.13 681.20,574.77 616.20,609.87 616.20,581.23" fill="url(#griser)" stroke="#000" stroke-width="1.45" stroke-linejoin="miter" />
<line x1="681.20" y1="542.83" x2="681.20" y2="574.77" stroke="#000" stroke-width="2.0"/>
<polygon points="682.20,574.77 715.10,579.17 650.10,614.27 637.20,599.07" fill="#c9a55f" stroke="#000" stroke-width="1.45" stroke-linejoin="miter" />
<polygon points="715.10,579.17 714.30,583.47 649.30,618.57 650.10,614.27" fill="#8c7c56" stroke="#000" stroke-width="1.45" stroke-linejoin="miter" />
<polygon points="714.10,583.47 714.10,612.11 649.10,647.21 649.10,618.57" fill="url(#griser)" stroke="#000" stroke-width="1.45" stroke-linejoin="miter" />
<line x1="714.10" y1="580.17" x2="714.10" y2="612.11" stroke="#000" stroke-width="2.0"/>
<polygon points="715.10,612.11 748.00,616.51 683.00,651.61 670.10,636.41" fill="#c9a55f" stroke="#000" stroke-width="1.45" stroke-linejoin="miter" />
<polygon points="748.00,616.51 747.20,620.81 682.20,655.91 683.00,651.61" fill="#8c7c56" stroke="#000" stroke-width="1.45" stroke-linejoin="miter" />
<polygon points="747.00,620.81 747.00,649.45 682.00,684.55 682.00,655.91" fill="url(#griser)" stroke="#000" stroke-width="1.45" stroke-linejoin="miter" />
<line x1="747.00" y1="617.51" x2="747.00" y2="649.45" stroke="#000" stroke-width="2.0"/>
<polygon points="748.00,649.45 780.90,653.85 715.90,688.95 703.00,673.75" fill="#c9a55f" stroke="#000" stroke-width="1.45" stroke-linejoin="miter" />
<polygon points="780.90,653.85 780.10,658.15 715.10,693.25 715.90,688.95" fill="#8c7c56" stroke="#000" stroke-width="1.45" stroke-linejoin="miter" />
<polygon points="779.90,658.15 779.90,686.79 714.90,721.89 714.90,693.25" fill="url(#griser)" stroke="#000" stroke-width="1.45" stroke-linejoin="miter" />
<line x1="779.90" y1="654.85" x2="779.90" y2="686.79" stroke="#000" stroke-width="2.0"/>
<polygon points="780.90,686.79 813.80,691.19 748.80,726.29 735.90,711.09" fill="#c9a55f" stroke="#000" stroke-width="1.45" stroke-linejoin="miter" />
<polygon points="813.80,691.19 813.00,695.49 748.00,730.59 748.80,726.29" fill="#8c7c56" stroke="#000" stroke-width="1.45" stroke-linejoin="miter" />
<polygon points="812.80,695.49 812.80,724.13 747.80,759.23 747.80,730.59" fill="url(#griser)" stroke="#000" stroke-width="1.45" stroke-linejoin="miter" />
<line x1="812.80" y1="692.19" x2="812.80" y2="724.13" stroke="#000" stroke-width="2.0"/>
<polygon points="813.80,724.13 846.70,728.53 781.70,763.63 768.80,748.43" fill="#c9a55f" stroke="#000" stroke-width="1.45" stroke-linejoin="miter" />
<polygon points="846.70,728.53 845.90,732.83 780.90,767.93 781.70,763.63" fill="#8c7c56" stroke="#000" stroke-width="1.45" stroke-linejoin="miter" />
<polygon points="845.70,732.83 845.70,761.47 780.70,796.57 780.70,767.93" fill="url(#griser)" stroke="#000" stroke-width="1.45" stroke-linejoin="miter" />
<line x1="845.70" y1="729.53" x2="845.70" y2="761.47" stroke="#000" stroke-width="2.0"/>
<polygon points="182.80,84.82 775.20,754.24 775.20,816.00 751.36,816.00 182.80,173.53" fill="url(#gface)" stroke="#000" stroke-width="1.45" stroke-linejoin="miter" />
<polygon points="182.80,84.82 187.40,85.02 779.80,752.99 775.20,754.24" fill="#767676" stroke="#000" stroke-width="1.45" stroke-linejoin="miter" />
<polygon points="775.20,754.24 779.80,752.99 779.80,816.00 775.20,816.00" fill="#222222" stroke="#000" stroke-width="1.45" stroke-linejoin="miter" />
<polygon points="206.99,-24.00 218.79,-24.00 776.00,605.64 776.00,618.98" fill="#c6c6c6" stroke="#000" stroke-width="1.45" stroke-linejoin="miter" /><polygon points="218.79,-24.00 224.79,-24.00 780.60,604.06 780.60,617.39 776.00,618.98 776.00,605.64" fill="#747474" stroke="#000" stroke-width="1.45" stroke-linejoin="miter" /><polygon points="776.00,605.64 780.60,604.06 780.60,617.39 776.00,618.98" fill="#222222" stroke="#000" stroke-width="1.45" stroke-linejoin="miter" />
<g transform="translate(182.80,84.60)"><polygon points="0.00,0.00 63.80,-63.80 68.70,-58.90 4.90,4.90" fill="url(#gbal)" stroke="none"/><line x1="0" y1="0" x2="63.80" y2="-63.80" stroke="#000" stroke-width="1.45"/><line x1="4.90" y1="4.90" x2="68.70" y2="-58.90" stroke="#000" stroke-width="1.45"/><line x1="63.80" y1="-63.80" x2="65.60" y2="-65.60" stroke="#000" stroke-width="1.2"/></g>
<g transform="translate(250.60,160.50)"><polygon points="0.00,0.00 63.80,-63.80 68.70,-58.90 4.90,4.90" fill="url(#gbal)" stroke="none"/><line x1="0" y1="0" x2="63.80" y2="-63.80" stroke="#000" stroke-width="1.45"/><line x1="4.90" y1="4.90" x2="68.70" y2="-58.90" stroke="#000" stroke-width="1.45"/><line x1="63.80" y1="-63.80" x2="65.60" y2="-65.60" stroke="#000" stroke-width="1.2"/></g>
<g transform="translate(325.50,245.10)"><polygon points="0.00,0.00 63.80,-63.80 68.70,-58.90 4.90,4.90" fill="url(#gbal)" stroke="none"/><line x1="0" y1="0" x2="63.80" y2="-63.80" stroke="#000" stroke-width="1.45"/><line x1="4.90" y1="4.90" x2="68.70" y2="-58.90" stroke="#000" stroke-width="1.45"/><line x1="63.80" y1="-63.80" x2="65.60" y2="-65.60" stroke="#000" stroke-width="1.2"/></g>
<g transform="translate(400.40,329.70)"><polygon points="0.00,0.00 63.80,-63.80 68.70,-58.90 4.90,4.90" fill="url(#gbal)" stroke="none"/><line x1="0" y1="0" x2="63.80" y2="-63.80" stroke="#000" stroke-width="1.45"/><line x1="4.90" y1="4.90" x2="68.70" y2="-58.90" stroke="#000" stroke-width="1.45"/><line x1="63.80" y1="-63.80" x2="65.60" y2="-65.60" stroke="#000" stroke-width="1.2"/></g>
<g transform="translate(475.30,414.30)"><polygon points="0.00,0.00 63.80,-63.80 68.70,-58.90 4.90,4.90" fill="url(#gbal)" stroke="none"/><line x1="0" y1="0" x2="63.80" y2="-63.80" stroke="#000" stroke-width="1.45"/><line x1="4.90" y1="4.90" x2="68.70" y2="-58.90" stroke="#000" stroke-width="1.45"/><line x1="63.80" y1="-63.80" x2="65.60" y2="-65.60" stroke="#000" stroke-width="1.2"/></g>
<g transform="translate(550.20,498.90)"><polygon points="0.00,0.00 63.80,-63.80 68.70,-58.90 4.90,4.90" fill="url(#gbal)" stroke="none"/><line x1="0" y1="0" x2="63.80" y2="-63.80" stroke="#000" stroke-width="1.45"/><line x1="4.90" y1="4.90" x2="68.70" y2="-58.90" stroke="#000" stroke-width="1.45"/><line x1="63.80" y1="-63.80" x2="65.60" y2="-65.60" stroke="#000" stroke-width="1.2"/></g>
<g transform="translate(625.10,583.50)"><polygon points="0.00,0.00 63.80,-63.80 68.70,-58.90 4.90,4.90" fill="url(#gbal)" stroke="none"/><line x1="0" y1="0" x2="63.80" y2="-63.80" stroke="#000" stroke-width="1.45"/><line x1="4.90" y1="4.90" x2="68.70" y2="-58.90" stroke="#000" stroke-width="1.45"/><line x1="63.80" y1="-63.80" x2="65.60" y2="-65.60" stroke="#000" stroke-width="1.2"/></g>
<g transform="translate(700.00,668.10)"><polygon points="0.00,0.00 63.80,-63.80 68.70,-58.90 4.90,4.90" fill="url(#gbal)" stroke="none"/><line x1="0" y1="0" x2="63.80" y2="-63.80" stroke="#000" stroke-width="1.45"/><line x1="4.90" y1="4.90" x2="68.70" y2="-58.90" stroke="#000" stroke-width="1.45"/><line x1="63.80" y1="-63.80" x2="65.60" y2="-65.60" stroke="#000" stroke-width="1.2"/></g>
<g transform="translate(774.90,752.70)"><polygon points="0.00,0.00 64.80,-64.80 69.70,-59.90 4.90,4.90" fill="url(#gbal)" stroke="none"/><line x1="0" y1="0" x2="64.80" y2="-64.80" stroke="#000" stroke-width="1.45"/><line x1="4.90" y1="4.90" x2="69.70" y2="-59.90" stroke="#000" stroke-width="1.45"/><ellipse cx="67.25" cy="-62.35" rx="3.1" ry="2.3" transform="rotate(45 67.25 -62.35)" fill="#8a8a8a" stroke="#000" stroke-width="1.2"/></g></svg>
<svg width="170" height="130" viewBox="0 0 170 130" style="position:absolute;left:1070px;top:180px;overflow:visible;"><defs><radialGradient id="vcs" cx="0.5" cy="0.5" r="0.5"><stop offset="0" stop-color="#000" stop-opacity=".16"/><stop offset="1" stop-color="#000" stop-opacity="0"/></radialGradient></defs><ellipse cx="82.300" cy="85" rx="57.500" ry="17" fill="none" stroke="#e3e8ee" stroke-width="14"/><ellipse cx="82.300" cy="84" rx="50" ry="14" fill="#fff" stroke="#b9bdc4" stroke-width="1.300"/><ellipse cx="80" cy="84" rx="42" ry="10" fill="url(#vcs)"/><path d="M47 33.500l46.500 3v51l-45-6z" fill="#ececf1" stroke="#bdbdc6" stroke-width="1" stroke-dasharray="3 1.500"/><path d="M93.500 36.500l16.500-8v43l-16.500 16z" fill="#e4e4ea" stroke="#bdbdc6" stroke-width="1" stroke-dasharray="3 1.500"/><path d="M47 33.500l15.500-6.500 47.500 1.500-16.500 8z" fill="#f1f1f5" stroke="#c6c6ce" stroke-width="1" stroke-dasharray="3 1.500"/><text x="57.500" y="66" font-family="'Liberation Sans', sans-serif" font-weight="bold" font-size="14" fill="#a9a9b0" textLength="25" lengthAdjust="spacingAndGlyphs">BACK</text><text x="0" y="0" transform="translate(99,66) rotate(-90) scale(.62,.7) skewX(-18)" font-family="'Liberation Sans', sans-serif" font-weight="bold" font-size="13" fill="#a9a9b0">LEFT</text><path d="M22 73l5 -3.500 3 3.500 5 -3.500 3 3" fill="none" stroke="#c3c7cd" stroke-width="2"/><path d="M129 88l5 -4 4 4.500 5 -4.500 4 3.500" fill="none" stroke="#b9bdc3" stroke-width="2.600"/><path d="M44 104l4 -7.500 4 7.500 4 -7.500" fill="none" stroke="#c3c7cd" stroke-width="2.300"/></svg>
<div style="position:absolute;left:1241px;top:144px;width:18px;height:783px;background:#f0f0f0"></div>
<div style="position:absolute;left:1242px;top:528px;width:14px;height:15px;box-sizing:border-box;border:1px solid #8e8e8e;border-radius:2px;background:linear-gradient(90deg,#f6f6f6,#e2e2e2 50%,#cfcfcf)"></div>
<svg width="17" height="783" viewBox="0 0 17 783" style="position:absolute;left:1242px;top:144px;overflow:visible;"><path d="M4.500 10h8l-4-4z" fill="#2a2a2a"/><path d="M4.500 771h8l-4 4z" fill="#2a2a2a"/></svg>
<div style="position:absolute;left:272px;top:927px;width:987px;height:19px;background:#f0f0f0"></div>
<span id="t66" style="position:absolute;left:296px;top:930.49px;font:normal 11.5px/13.21px 'Liberation Sans', sans-serif;color:#000;white-space:pre;transform:scaleX(0.9582);transform-origin:0 0;">1 : 100</span>
<div style="position:absolute;left:871px;top:928px;width:15px;height:15px;box-sizing:border-box;border:1px solid #8e8e8e;border-radius:2px;background:linear-gradient(#f6f6f6,#e4e4e4 50%,#d0d0d0)"></div>
<svg width="740" height="19" viewBox="0 0 740 19" style="position:absolute;left:518px;top:927px;overflow:visible;"><path d="M9 4.500l-4 4 4 4z" fill="#2a2a2a"/><path d="M711 4.500l4 4-4 4z" fill="#2a2a2a"/><g fill="#b4b4b4"><rect x="733" y="9" width="1.500" height="1.500"/><rect x="733" y="13" width="1.500" height="1.500"/><rect x="729" y="13" width="1.500" height="1.500"/><rect x="725" y="13" width="1.500" height="1.500"/><rect x="729" y="9" width="1.500" height="1.500"/><rect x="733" y="5" width="1.500" height="1.500"/></g></svg>
<svg width="12" height="11" viewBox="0 0 12 11" style="position:absolute;left:354px;top:929px;overflow:visible;"><defs><pattern id="chk2" width="3" height="3" patternUnits="userSpaceOnUse"><rect width="3" height="3" fill="#fff"/><rect width="1.500" height="1.500" fill="#555"/><rect x="1.500" y="1.500" width="1.500" height="1.500" fill="#555"/></pattern></defs><rect x="1" y="1" width="9.500" height="9" fill="url(#chk2)" stroke="#000" stroke-width="1.400"/></svg>
<svg width="17" height="13" viewBox="0 0 17 13" style="position:absolute;left:372px;top:927px;overflow:visible;"><path d="M1 6l7.500-4.500 7 2.500v4l-8 4.500-6.500-3z" fill="#8cc8f0" stroke="#2070c0" stroke-width="1.100"/><path d="M1 6l6.500 2.500 8-4.500M7.500 8.500v4" fill="none" stroke="#2070c0" stroke-width="1"/><path d="M1.800 6l6.700-3.800 6 2-7 4z" fill="#c0e4fa"/></svg>
<svg width="16" height="13" viewBox="0 0 16 13" style="position:absolute;left:393px;top:928px;overflow:visible;"><path d="M5 11l10-1.500-3 2.500h-9z" fill="#c4c4c4"/><path d="M2 9c0-4 2-7 5-7.500h4c-1 3-1.500 5-3.500 7.500z" fill="#fff" stroke="#7a7a7a" stroke-width="1.100"/></svg>
<svg width="18" height="14" viewBox="0 0 18 14" style="position:absolute;left:413px;top:927px;overflow:visible;"><ellipse cx="8.500" cy="8" rx="5" ry="4.500" fill="#fff" stroke="#000" stroke-width="1"/><path d="M13 6.500c2-2 3-2.500 4-2M4 6c-2-2.500-3-1-1.500 1.500s2 2.500 2 3.500M6.500 3.500h4M8.500 3.500v-2" fill="none" stroke="#000" stroke-width="1"/></svg>
<svg width="14" height="13" viewBox="0 0 14 13" style="position:absolute;left:435px;top:928px;overflow:visible;"><path d="M4 0v10.500h9M0 3h10.500v10" fill="none" stroke="#1010d0" stroke-width="2"/><path d="M1 12l11-11.500" stroke="#d01010" stroke-width="1.300"/></svg>
<svg width="15" height="14" viewBox="0 0 15 14" style="position:absolute;left:456px;top:927px;overflow:visible;"><path d="M4 2v10.500h9M0 5h10.500v9.500" fill="none" stroke="#1010d0" stroke-width="2"/><path d="M10.500 1c0-1 3-1 3 0l-.5 3.500h-2z" fill="#b0b0b0" stroke="#6a6a6a" stroke-width=".8"/><rect x="11" y="5" width="2" height="1.500" fill="#6a6a6a"/></svg>
<svg width="17" height="13" viewBox="0 0 17 13" style="position:absolute;left:476px;top:927px;overflow:visible;"><path d="M0 5c1.500-2 2.500-2 3.500 0s2 3.500 3.500 3.500M8 4c1-3 3-3.500 5.500-2" fill="none" stroke="#000" stroke-width="1.100"/><circle cx="8" cy="9" r="2.600" fill="#fff" stroke="#000" stroke-width=".9"/><circle cx="13.500" cy="6.500" r="2.600" fill="#fff" stroke="#000" stroke-width=".9"/><path d="M10.500 8l1-1" stroke="#000" stroke-width="1"/></svg>
<svg width="10" height="14" viewBox="0 0 10 14" style="position:absolute;left:500px;top:927px;overflow:visible;"><path d="M5 1c-5 0-4.500 5-2 7v2h4v-2c2.500-2 3-7-2-7z" fill="#e8eef4" stroke="#5a6470" stroke-width="1.100"/><path d="M3.500 11.500h3M4 13h2" stroke="#5a6470" stroke-width="1.100"/></svg>
<div style="position:absolute;left:8px;top:946px;width:1251px;height:1px;background:#9c9c9c"></div>
<div style="position:absolute;left:8px;top:947px;width:1251px;height:19px;background:#f4f2f0"></div>
<span id="t67" style="position:absolute;left:11.4px;top:950.64px;font:normal 12px/13.79px 'Liberation Sans', sans-serif;color:#000;white-space:pre;transform:scaleX(0.9503);transform-origin:0 0;">Click to select, TAB for alternates, CTRL adds, SHIFT unselects.</span>
<div style="position:absolute;left:1015px;top:949px;width:1px;height:16px;background:#dcdad8"></div>
<div style="position:absolute;left:1082px;top:949px;width:1px;height:16px;background:#dcdad8"></div>
<div style="position:absolute;left:1116px;top:949px;width:1px;height:16px;background:#dcdad8"></div>
<div style="position:absolute;left:1213px;top:949px;width:1px;height:16px;background:#dcdad8"></div>
<span id="t68" style="position:absolute;left:1050.4px;top:951.54px;font:normal 11px/12.64px 'Liberation Sans', sans-serif;color:#000;white-space:pre;transform:scaleX(1.1252);transform-origin:0 0;">NUM</span>
<span id="t69" style="position:absolute;left:1137.4px;top:951.54px;font:normal 11px/12.64px 'Liberation Sans', sans-serif;color:#000;white-space:pre;transform:scaleX(1.0558);transform-origin:0 0;">:0</span>
<svg width="18" height="16" viewBox="0 0 18 16" style="position:absolute;left:1120px;top:949px;overflow:visible;"><path d="M1.500 2h14l-5.500 6v6h-3V8z" fill="#5b9be0" stroke="#1c4f9c" stroke-width="1.200"/></svg>
<svg width="20" height="18" viewBox="0 0 20 18" style="position:absolute;left:1218px;top:948px;overflow:visible;"><path d="M3 14c3-1 5-4 4-9M5 3c2-2 6-2 8 1" fill="none" stroke="#3d5fa8" stroke-width="2"/><path d="M11 6l6 10H5z" fill="#f5e53c" stroke="#b8a800" stroke-width=".8"/><rect x="10.300" y="9" width="1.600" height="3.500" fill="#000"/><rect x="10.300" y="13.500" width="1.600" height="1.500" fill="#000"/></svg>
<svg width="16" height="16" viewBox="0 0 16 16" style="position:absolute;left:1240px;top:950px;overflow:visible;"><g fill="#bdbbb8"><rect x="11" y="3" width="1.500" height="1.500"/><rect x="11" y="7" width="1.500" height="1.500"/><rect x="11" y="11" width="1.500" height="1.500"/><rect x="7" y="7" width="1.500" height="1.500"/><rect x="7" y="11" width="1.500" height="1.500"/><rect x="3" y="11" width="1.500" height="1.500"/></g></svg>
<svg width="18" height="18" viewBox="0 0 18 18" style="position:absolute;left:897px;top:975px;overflow:visible;"><rect x="1" y="1.500" width="13" height="12" fill="#fff" stroke="#7a7a7a" stroke-width="1"/><rect x="1" y="1.500" width="13" height="3" fill="#c8ccd4"/><path d="M11.500 7l3 1v3.500c0 2-1.500 3-3 4c-1.500-1-3-2-3-4v-3.500z" fill="#f0a020" stroke="#a06000" stroke-width=".7"/><rect x="11" y="9" width="1.200" height="3.500" fill="#402000"/><rect x="11" y="13.200" width="1.200" height="1.200" fill="#402000"/></svg>
<svg width="16" height="16" viewBox="0 0 16 16" style="position:absolute;left:914px;top:975px;overflow:visible;"><defs><radialGradient id="glb" cx=".4" cy=".35" r=".7"><stop offset="0" stop-color="#8fd0f8"/><stop offset="1" stop-color="#1c5cb0"/></radialGradient></defs><circle cx="8" cy="8" r="7" fill="url(#glb)" stroke="#1a3c78" stroke-width=".8"/><path d="M3 6c2-3 4-3 5-1s-1 3 0 5-2 3-3 1-3-3-2-5zM10 4c2 0 4 2 4 4s-2 2-3 1-2-3-1-5z" fill="#48b048"/></svg>
<svg width="16" height="16" viewBox="0 0 16 16" style="position:absolute;left:1190px;top:975px;overflow:visible;"><circle cx="6" cy="6" r="4.600" fill="#bcd8f4" stroke="#3a68a8" stroke-width="1.400"/><path d="M9.500 9.500l4.500 4.500" stroke="#8a8a8a" stroke-width="2.500" stroke-linecap="round"/><path d="M3.500 6h5M6 3.500v5" stroke="#2a58a0" stroke-width="1.500"/></svg>
<svg width="10" height="8" viewBox="0 0 10 8" style="position:absolute;left:1247px;top:980px;overflow:visible;"><path d="M1 1.500h8l-4 4z" fill="#333"/></svg>
<svg width="14" height="14" viewBox="0 0 14 14" style="position:absolute;left:1264px;top:978px;overflow:visible;"><g fill="#b8b8b8"><rect x="9" y="2" width="1.500" height="1.500"/><rect x="9" y="6" width="1.500" height="1.500"/><rect x="9" y="10" width="1.500" height="1.500"/><rect x="5" y="6" width="1.500" height="1.500"/><rect x="5" y="10" width="1.500" height="1.500"/><rect x="1" y="10" width="1.500" height="1.500"/></g></svg>
<svg width="50" height="40" viewBox="0 0 50 40" style="position:absolute;left:6px;top:986px;overflow:visible;"><defs><radialGradient id="orb" cx=".5" cy=".3" r=".75"><stop offset="0" stop-color="#9fd4f4"/><stop offset=".45" stop-color="#3a86c8"/><stop offset="1" stop-color="#0c2c58"/></radialGradient></defs><circle cx="24" cy="24" r="21" fill="#0a1420" stroke="#28405c" stroke-width="1"/><circle cx="24" cy="24" r="18.500" fill="url(#orb)" stroke="#bcd8ee" stroke-opacity=".5" stroke-width="1"/><path d="M14.500 14c3-1.800 5.500-1.800 8.500 0l-1.500 8c-3-1.500-5.500-1.500-8 0z" fill="#f06a28"/><path d="M25 14.500c3 1.500 5.500 1.500 8.500 0l-1.500 8c-3 1.500-5.500 1.500-8.500 0z" fill="#8cc83c"/><path d="M13 24.500c3-1.800 5.500-1.800 8 0l-1.500 8c-2.500-1.500-5-1.500-8 0z" fill="#4aa0e8"/><path d="M23.500 25c3 1.500 5.500 1.500 8.500 0l-1.500 8c-3 1.500-5.500 1.500-8.500 0z" fill="#f8c830"/></svg>
<svg width="18" height="16" viewBox="0 0 18 16" style="position:absolute;left:64px;top:1001px;overflow:visible;"><rect x="1" y="1" width="15" height="12" fill="#2a68c8" stroke="#c8d8f0" stroke-width="1.200"/><rect x="2" y="10" width="13" height="2.500" fill="#1a2a48"/><rect x="2" y="2" width="13" height="4" fill="#5a98e8" opacity=".6"/></svg>
<svg width="18" height="16" viewBox="0 0 18 16" style="position:absolute;left:87px;top:1001px;overflow:visible;"><rect x="1" y="1" width="15" height="13" fill="#123a88" stroke="#c8d8f0" stroke-width="1.200"/><rect x="3.500" y="3.500" width="6" height="4" fill="#e8eef8" stroke="#fff" stroke-width=".6"/><rect x="7" y="7.500" width="6.500" height="4.500" fill="#e8eef8" stroke="#fff" stroke-width=".6"/></svg>
<svg width="22" height="20" viewBox="0 0 22 20" style="position:absolute;left:109px;top:998px;overflow:visible;"><g transform="scale(1)"><text x="3" y="17" font-family="'Liberation Sans', sans-serif" font-weight="bold" font-size="23" fill="#2d8de0" stroke="#1a5cb0" stroke-width=".4">e</text><path d="M1.500 15c-2.500-4.500 6-12.500 16.500-13M18.500 5.500c-2.500 4.500-9 9-15 10" fill="none" stroke="#f2bc24" stroke-width="1.900"/></g></svg>
<svg width="10" height="10" viewBox="0 0 10 10" style="position:absolute;left:145px;top:999px;overflow:visible;"><path d="M1 1.500l3 3-3 3M5 1.500l3 3-3 3" fill="none" stroke="#fff" stroke-width="1.500"/></svg>
<svg width="18" height="18" viewBox="0 0 18 18" style="position:absolute;left:170px;top:1001px;overflow:visible;"><rect x="0" y="1" width="13" height="15" fill="#f4eef4"/><text x="0.500" y="11" font-family="'Liberation Sans', sans-serif" font-weight="bold" font-size="12" fill="#b02a7a">R</text><text x="8" y="17" font-family="'Liberation Sans', sans-serif" font-weight="bold" font-size="9" fill="#fff">A</text></svg>
<svg width="20.24" height="18.4" viewBox="0 0 20.24 18.4" style="position:absolute;left:328px;top:999px;overflow:visible;"><g transform="scale(0.92)"><text x="3" y="17" font-family="'Liberation Sans', sans-serif" font-weight="bold" font-size="23" fill="#2d8de0" stroke="#1a5cb0" stroke-width=".4">e</text><path d="M1.500 15c-2.500-4.500 6-12.500 16.500-13M18.500 5.500c-2.500 4.500-9 9-15 10" fill="none" stroke="#f2bc24" stroke-width="1.900"/></g></svg>
<svg width="18" height="18" viewBox="0 0 18 18" style="position:absolute;left:1056px;top:1000px;overflow:visible;"><circle cx="6" cy="6" r="3.500" fill="#e84040"/><circle cx="11" cy="6" r="3.500" fill="#f0c020"/><circle cx="6" cy="11" r="3.500" fill="#40a0f0"/><circle cx="11" cy="11" r="3.500" fill="#60c040"/><circle cx="8.500" cy="8.500" r="2.200" fill="#fff"/></svg>
<svg width="10" height="8" viewBox="0 0 10 8" style="position:absolute;left:1130px;top:1004px;overflow:visible;"><path d="M1 1.500h8l-4 4z" fill="#c8c8c8"/></svg>
<svg width="10" height="12" viewBox="0 0 10 12" style="position:absolute;left:1156px;top:1003px;overflow:visible;"><path d="M7 1l-5 5 5 5" fill="none" stroke="#fff" stroke-width="2"/></svg>
<svg width="20" height="20" viewBox="0 0 20 20" style="position:absolute;left:1171px;top:999px;overflow:visible;"><circle cx="8" cy="9" r="7.500" fill="#f0a818" stroke="#fff" stroke-width="1"/><path d="M8 9l0-6a6 6 0 0 1 5.500 4z" fill="#c82020"/><path d="M8 9l-5 3a6 6 0 0 1 0-6z" fill="#f8d848"/><circle cx="11.500" cy="13" r="4" fill="#28a838" stroke="#fff" stroke-width=".8"/><path d="M9.500 13l1.500 1.500 2.500-3" stroke="#fff" stroke-width="1.300" fill="none"/></svg>
<svg width="20" height="20" viewBox="0 0 20 20" style="position:absolute;left:1199px;top:999px;overflow:visible;"><rect x="2" y="2" width="11" height="9" fill="#3878d0" stroke="#e8f0ff" stroke-width="1.300"/><rect x="6" y="6" width="11" height="9" fill="#2058b0" stroke="#e8f0ff" stroke-width="1.300"/><circle cx="13" cy="13.500" r="3.500" fill="#30a0e0" stroke="#fff" stroke-width=".6"/></svg>
<svg width="20" height="18" viewBox="0 0 20 18" style="position:absolute;left:1217px;top:1000px;overflow:visible;"><path d="M2 6h3l4-4v13l-4-4h-3z" fill="#f4f4f4" stroke="#8a8a8a" stroke-width=".6"/><path d="M11.500 5.500c1.500 1.500 1.500 4.500 0 6M14 3.500c2.500 2.500 2.500 7.500 0 10" fill="none" stroke="#58c858" stroke-width="1.300"/></svg></body></html>
